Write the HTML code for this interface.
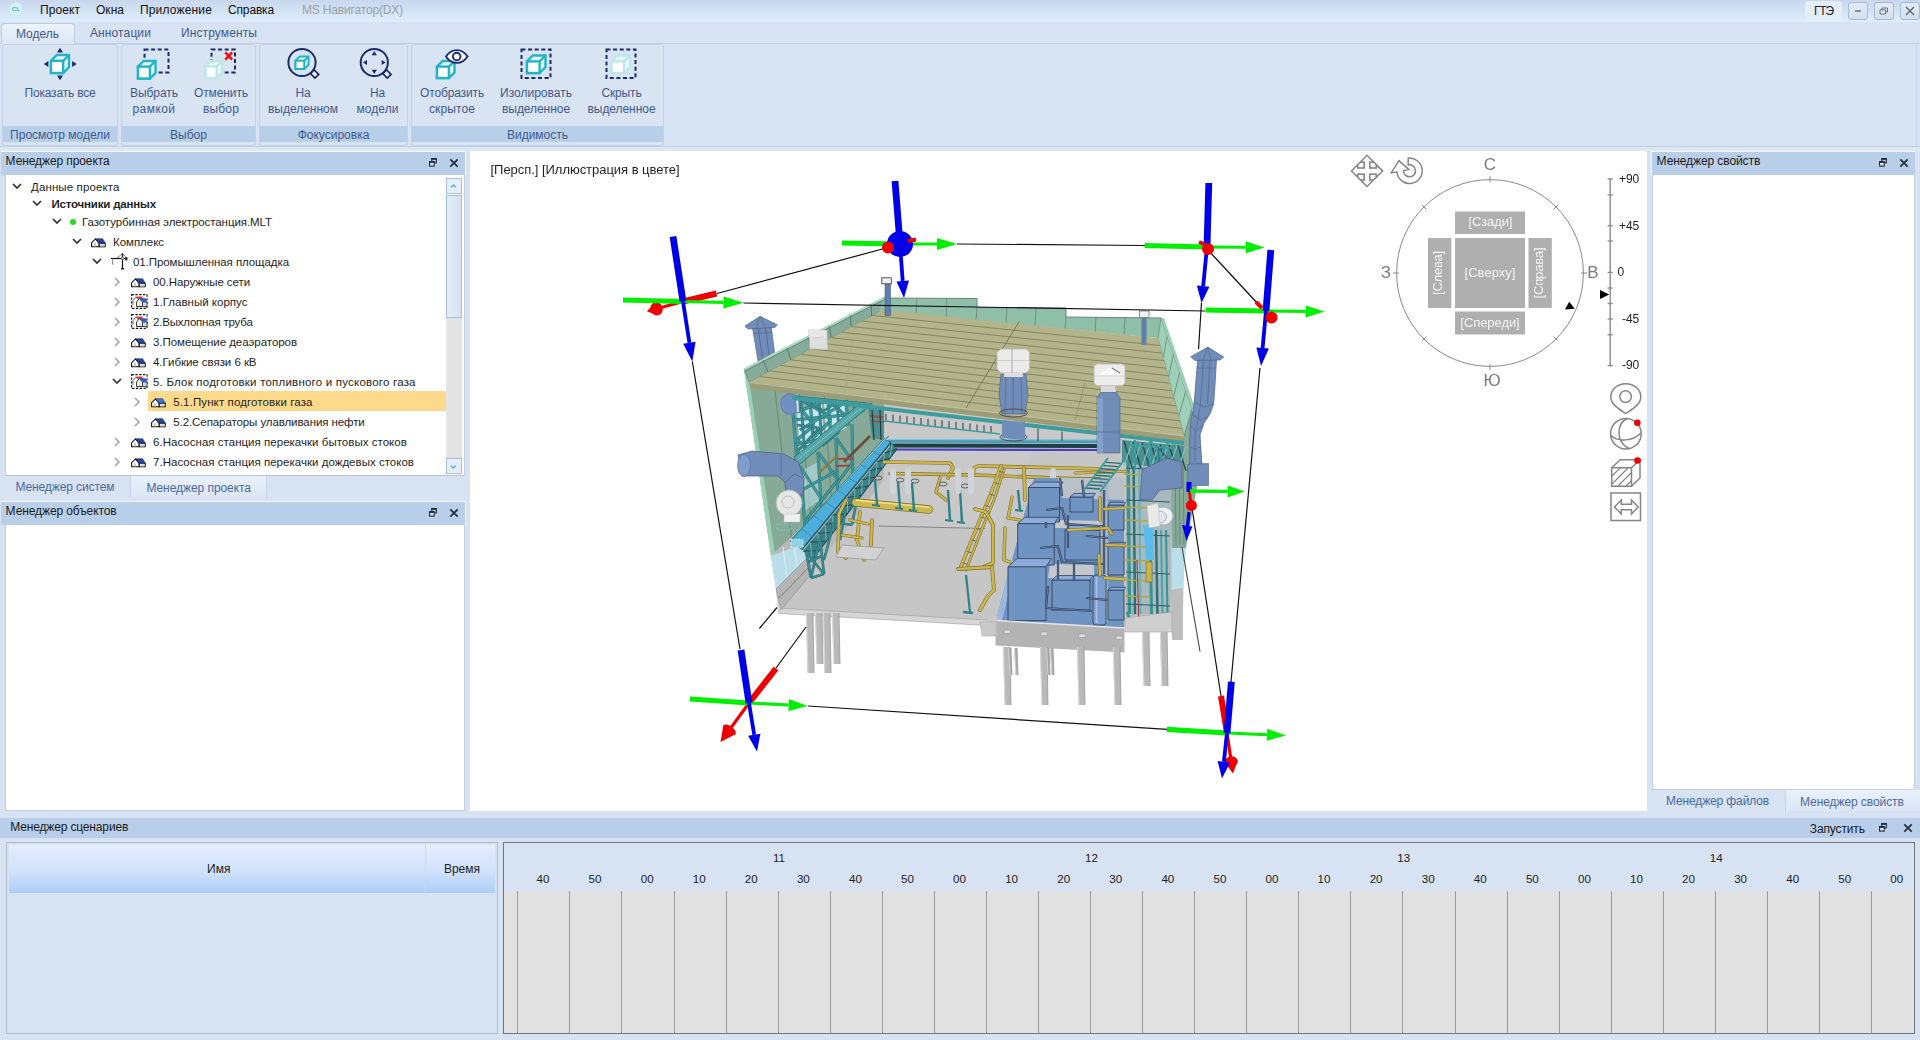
<!DOCTYPE html>
<html lang="ru"><head><meta charset="utf-8"><title>MS Навигатор(DX)</title>
<style>
html,body{margin:0;padding:0;}
body{width:1920px;height:1040px;overflow:hidden;background:#d7e3f2;font-family:"Liberation Sans", sans-serif;position:relative;}
#app{position:absolute;left:0;top:0;width:1920px;height:1040px;overflow:hidden;}
#app div{position:absolute;box-sizing:border-box;}
.t{position:absolute;white-space:pre;font-family:"Liberation Sans", sans-serif;}
svg{position:absolute;overflow:visible;}
</style></head><body><div id="app">
<div style="left:0px;top:0px;width:1920px;height:22px;background:linear-gradient(#c8d7ee,#d3e3f4 50%,#deeefd);"></div>
<svg style="left:8px;top:1px" width="16" height="16" viewBox="0 0 16 16"><path d="M7.800 1.300a6.600 6.600 0 1 1-3.600 12.100L2.300 14.600l.5-2.700A6.600 6.600 0 0 1 7.800 1.300z" fill="#d3f2f3" stroke="#bfe9ec" stroke-width="0.6"/><text x="3.700" y="10.200" font-size="6.200" font-weight="700" font-family="Liberation Sans" fill="#2fb6c8">CL</text></svg>
<div style="left:1805px;top:1px;width:37px;height:20px;background:#e4eefa;border-radius:4px;"></div>
<div style="left:1848px;top:2px;width:20px;height:18px;background:linear-gradient(#e2ebf8,#d3dff0);border:1px solid #a9b9d0;border-radius:3px;"></div>
<div style="left:1874px;top:2px;width:20px;height:18px;background:linear-gradient(#e2ebf8,#d3dff0);border:1px solid #a9b9d0;border-radius:3px;"></div>
<div style="left:1900px;top:2px;width:20px;height:18px;background:linear-gradient(#e2ebf8,#d3dff0);border:1px solid #a9b9d0;border-radius:3px;"></div>
<div style="left:1855px;top:10px;width:6px;height:2px;background:#8a919c;"></div>
<svg style="left:1879px;top:7px" width="10" height="9" viewBox="0 0 10 9"><path d="M3 2.500V1h5.500v4H7M1 2.800h5.500v4.200H1z" fill="none" stroke="#6d7480" stroke-width="1"/></svg>
<svg style="left:1905px;top:6px" width="10" height="10" viewBox="0 0 10 10"><path d="M1 1l8 8M9 1l-8 8" stroke="#555c66" stroke-width="1.1"/></svg>
<div style="left:0px;top:22px;width:1920px;height:22px;background:#d7e3f2;"></div>
<div style="left:1px;top:23px;width:74px;height:21px;background:linear-gradient(#edf3fc,#dbe5f4);border:1px solid #bccde4;border-bottom:none;border-radius:4px 4px 0 0;"></div>
<div style="left:0px;top:43px;width:1920px;height:1px;background:#bfd0e6;"></div>
<div style="left:2px;top:43px;width:72px;height:1px;background:#dbe5f4;"></div>
<div style="left:2px;top:44px;width:116px;height:102px;background:#d9e4f3;border:1px solid #c2d1e6;border-radius:3px;"></div>
<div style="left:3px;top:126px;width:114px;height:16px;background:#b7cfe9;"></div>
<div style="left:121px;top:44px;width:135px;height:102px;background:#d9e4f3;border:1px solid #c2d1e6;border-radius:3px;"></div>
<div style="left:122px;top:126px;width:133px;height:16px;background:#b7cfe9;"></div>
<div style="left:259px;top:44px;width:149px;height:102px;background:#d9e4f3;border:1px solid #c2d1e6;border-radius:3px;"></div>
<div style="left:260px;top:126px;width:147px;height:16px;background:#b7cfe9;"></div>
<div style="left:411px;top:44px;width:253px;height:102px;background:#d9e4f3;border:1px solid #c2d1e6;border-radius:3px;"></div>
<div style="left:412px;top:126px;width:251px;height:16px;background:#b7cfe9;"></div>
<div style="left:1916px;top:44px;width:1px;height:102px;background:#c6d5e9;"></div>
<div style="left:0px;top:146px;width:1920px;height:1px;background:#bfcfe4;"></div>
<div style="left:0px;top:147px;width:1920px;height:4px;background:#dde7f4;"></div>
<div style="left:1px;top:151px;width:465px;height:24px;background:#f4f8fd;"></div>
<div style="left:1px;top:152px;width:464px;height:23px;background:#b9cfe9;"></div>
<svg style="left:428px;top:157px" width="12" height="11" viewBox="0 0 12 11"><path d="M3.800 4V1.700H8.300V6H7" fill="none" stroke="#1e2a36" stroke-width="1.100"/><path d="M3.300 1.900H8.800" stroke="#1e2a36" stroke-width="1.700"/><rect x="1.600" y="4.800" width="4.600" height="4.300" fill="#dce8f8" stroke="#1e2a36" stroke-width="1.100"/><path d="M1.100 5H6.700" stroke="#1e2a36" stroke-width="1.700"/></svg>
<svg style="left:449px;top:158px" width="10" height="10" viewBox="0 0 10 10"><path d="M1.300 1.300L8.700 8.600M8.700 1.300L1.300 8.600" stroke="#26303c" stroke-width="1.800"/></svg>
<div style="left:5px;top:175px;width:460px;height:301px;background:#fff;border-left:1px solid #c5d0df;border-right:1px solid #c5d0df;border-bottom:1px solid #b9c4d4;"></div>
<div style="left:446px;top:318px;width:16px;height:140px;background:#e4e4e4;"></div>
<div style="left:446px;top:178px;width:16px;height:16px;background:#e5eefb;border:1px solid #a9bdd9;"></div>
<div style="left:446px;top:195px;width:16px;height:123px;background:linear-gradient(90deg,#e6eefa,#d6e1f1);border:1px solid #a9bdd9;"></div>
<div style="left:446px;top:458px;width:16px;height:16px;background:#e5eefb;border:1px solid #a9bdd9;"></div>
<svg style="left:450px;top:184px" width="7" height="4" viewBox="0 0 7 4"><path d="M0.800 3.300L3.300 1 5.800 3.300" fill="none" stroke="#3fa9d0" stroke-width="1.200"/></svg>
<svg style="left:450px;top:464.500px" width="7" height="4" viewBox="0 0 7 4"><path d="M0.800 0.700L3.300 3 5.800 0.700" fill="none" stroke="#3fa9d0" stroke-width="1.200"/></svg>
<div style="left:148px;top:391px;width:298px;height:20px;background:#fdd98c;"></div>
<svg style="left:12px;top:183px" width="10" height="7" viewBox="0 0 10 7"><path d="M1 1l4 4 4-4" fill="none" stroke="#333" stroke-width="1.700"/></svg>
<svg style="left:32px;top:200px" width="10" height="7" viewBox="0 0 10 7"><path d="M1 1l4 4 4-4" fill="none" stroke="#333" stroke-width="1.700"/></svg>
<svg style="left:52px;top:218px" width="10" height="7" viewBox="0 0 10 7"><path d="M1 1l4 4 4-4" fill="none" stroke="#333" stroke-width="1.700"/></svg>
<div style="left:70px;top:219px;width:6px;height:6px;background:#22dd22;border-radius:3px;"></div>
<svg style="left:72px;top:238px" width="10" height="7" viewBox="0 0 10 7"><path d="M1 1l4 4 4-4" fill="none" stroke="#333" stroke-width="1.700"/></svg>
<svg style="left:91px;top:237.6px" width="15" height="9.400" viewBox="0 0 15 10" preserveAspectRatio="none"><path d="M8 5.500H14.300V9.400H8z" fill="#ededed" stroke="#111" stroke-width="1"/><path d="M0.600 9.400V5L4.500 1 8 5.500V9.400z" fill="#fff" stroke="#111" stroke-width="1.100"/><path d="M4.500 0.700H11.600L14.400 5.500H8z" fill="#2447a5" stroke="#111" stroke-width="0.500"/><rect x="2.900" y="5.600" width="2" height="3.300" fill="#c9c9c9"/><rect x="9.700" y="6.600" width="3" height="2.300" fill="#d2d2d2"/></svg>
<svg style="left:92px;top:258px" width="10" height="7" viewBox="0 0 10 7"><path d="M1 1l4 4 4-4" fill="none" stroke="#333" stroke-width="1.700"/></svg>
<svg style="left:110px;top:252px" width="18" height="18" viewBox="0 0 18 18"><path d="M12.500 1.300V16.500" stroke="#111" stroke-width="1.200"/><path d="M11 16.800H14.200" stroke="#111" stroke-width="1.300"/><path d="M1 6.500H16.800" stroke="#111" stroke-width="1.200"/><path d="M12.500 1.500L7 6.200M12.500 1.500L16.200 5.500" stroke="#333" stroke-width="0.700" fill="none"/><rect x="15.400" y="5.200" width="2" height="3.200" fill="#111"/><path d="M2.500 6.500V12.300h1" stroke="#888" stroke-width="0.900" fill="none"/><circle cx="12.500" cy="6.500" r="1.400" fill="#c4c4c4" stroke="#333" stroke-width="0.500"/></svg>
<svg style="left:114.3px;top:277.2px" width="7" height="10" viewBox="0 0 7 10"><path d="M1 1l4 4-4 4" fill="none" stroke="#a4a4a4" stroke-width="1.600"/></svg>
<svg style="left:131px;top:277.59999999999997px" width="15" height="9.400" viewBox="0 0 15 10" preserveAspectRatio="none"><path d="M8 5.500H14.300V9.400H8z" fill="#ededed" stroke="#111" stroke-width="1"/><path d="M0.600 9.400V5L4.500 1 8 5.500V9.400z" fill="#fff" stroke="#111" stroke-width="1.100"/><path d="M4.500 0.700H11.600L14.400 5.500H8z" fill="#2447a5" stroke="#111" stroke-width="0.500"/><rect x="2.900" y="5.600" width="2" height="3.300" fill="#c9c9c9"/><rect x="9.700" y="6.600" width="3" height="2.300" fill="#d2d2d2"/></svg>
<svg style="left:114.3px;top:297.2px" width="7" height="10" viewBox="0 0 7 10"><path d="M1 1l4 4-4 4" fill="none" stroke="#a4a4a4" stroke-width="1.600"/></svg>
<svg style="left:131px;top:294px" width="17" height="15" viewBox="0 0 17 15"><rect x="0.600" y="0.600" width="15.400" height="13.800" fill="#fff" stroke="#111" stroke-width="1.100" stroke-dasharray="2.300 1.500"/><path d="M2 11V6.500L5 3 8 6.500" fill="#fff" stroke="#444" stroke-width="0.800"/><path d="M5 2.400H11L12.600 5H7z" fill="#e8382c"/><path d="M11.500 8H16V12.500H11.500z" fill="#e6e6e6" stroke="#222" stroke-width="0.800"/><path d="M5.500 12.500V8L8.500 4.500 11.500 8V12.500z" fill="#fff" stroke="#222" stroke-width="0.900"/><path d="M8.500 4.200H14.600L16.400 8H11.500z" fill="#2e5fd0"/><rect x="7.600" y="9" width="1.800" height="3" fill="#d0d0d0"/><rect x="12.600" y="9.300" width="2.400" height="2" fill="#d0d0d0"/></svg>
<svg style="left:114.3px;top:317.2px" width="7" height="10" viewBox="0 0 7 10"><path d="M1 1l4 4-4 4" fill="none" stroke="#a4a4a4" stroke-width="1.600"/></svg>
<svg style="left:131px;top:314px" width="17" height="15" viewBox="0 0 17 15"><rect x="0.600" y="0.600" width="15.400" height="13.800" fill="#fff" stroke="#111" stroke-width="1.100" stroke-dasharray="2.300 1.500"/><path d="M2 11V6.500L5 3 8 6.500" fill="#fff" stroke="#444" stroke-width="0.800"/><path d="M5 2.400H11L12.600 5H7z" fill="#e8382c"/><path d="M11.500 8H16V12.500H11.500z" fill="#e6e6e6" stroke="#222" stroke-width="0.800"/><path d="M5.500 12.500V8L8.500 4.500 11.500 8V12.500z" fill="#fff" stroke="#222" stroke-width="0.900"/><path d="M8.500 4.200H14.600L16.400 8H11.500z" fill="#2e5fd0"/><rect x="7.600" y="9" width="1.800" height="3" fill="#d0d0d0"/><rect x="12.600" y="9.300" width="2.400" height="2" fill="#d0d0d0"/></svg>
<svg style="left:114.3px;top:337.2px" width="7" height="10" viewBox="0 0 7 10"><path d="M1 1l4 4-4 4" fill="none" stroke="#a4a4a4" stroke-width="1.600"/></svg>
<svg style="left:131px;top:337.59999999999997px" width="15" height="9.400" viewBox="0 0 15 10" preserveAspectRatio="none"><path d="M8 5.500H14.300V9.400H8z" fill="#ededed" stroke="#111" stroke-width="1"/><path d="M0.600 9.400V5L4.500 1 8 5.500V9.400z" fill="#fff" stroke="#111" stroke-width="1.100"/><path d="M4.500 0.700H11.600L14.400 5.500H8z" fill="#2447a5" stroke="#111" stroke-width="0.500"/><rect x="2.900" y="5.600" width="2" height="3.300" fill="#c9c9c9"/><rect x="9.700" y="6.600" width="3" height="2.300" fill="#d2d2d2"/></svg>
<svg style="left:114.3px;top:357.2px" width="7" height="10" viewBox="0 0 7 10"><path d="M1 1l4 4-4 4" fill="none" stroke="#a4a4a4" stroke-width="1.600"/></svg>
<svg style="left:131px;top:357.59999999999997px" width="15" height="9.400" viewBox="0 0 15 10" preserveAspectRatio="none"><path d="M8 5.500H14.300V9.400H8z" fill="#ededed" stroke="#111" stroke-width="1"/><path d="M0.600 9.400V5L4.500 1 8 5.500V9.400z" fill="#fff" stroke="#111" stroke-width="1.100"/><path d="M4.500 0.700H11.600L14.400 5.500H8z" fill="#2447a5" stroke="#111" stroke-width="0.500"/><rect x="2.900" y="5.600" width="2" height="3.300" fill="#c9c9c9"/><rect x="9.700" y="6.600" width="3" height="2.300" fill="#d2d2d2"/></svg>
<svg style="left:112px;top:378px" width="10" height="7" viewBox="0 0 10 7"><path d="M1 1l4 4 4-4" fill="none" stroke="#333" stroke-width="1.700"/></svg>
<svg style="left:131px;top:374px" width="17" height="15" viewBox="0 0 17 15"><rect x="0.600" y="0.600" width="15.400" height="13.800" fill="#fff" stroke="#111" stroke-width="1.100" stroke-dasharray="2.300 1.500"/><path d="M2 11V6.500L5 3 8 6.500" fill="#fff" stroke="#444" stroke-width="0.800"/><path d="M5 2.400H11L12.600 5H7z" fill="#e8382c"/><path d="M11.500 8H16V12.500H11.500z" fill="#e6e6e6" stroke="#222" stroke-width="0.800"/><path d="M5.500 12.500V8L8.500 4.500 11.500 8V12.500z" fill="#fff" stroke="#222" stroke-width="0.900"/><path d="M8.500 4.200H14.600L16.400 8H11.500z" fill="#2e5fd0"/><rect x="7.600" y="9" width="1.800" height="3" fill="#d0d0d0"/><rect x="12.600" y="9.300" width="2.400" height="2" fill="#d0d0d0"/></svg>
<svg style="left:134.3px;top:397.2px" width="7" height="10" viewBox="0 0 7 10"><path d="M1 1l4 4-4 4" fill="none" stroke="#a4a4a4" stroke-width="1.600"/></svg>
<svg style="left:151.3px;top:397.59999999999997px" width="15" height="9.400" viewBox="0 0 15 10" preserveAspectRatio="none"><path d="M8 5.500H14.300V9.400H8z" fill="#ededed" stroke="#111" stroke-width="1"/><path d="M0.600 9.400V5L4.500 1 8 5.500V9.400z" fill="#fff" stroke="#111" stroke-width="1.100"/><path d="M4.500 0.700H11.600L14.400 5.500H8z" fill="#3b74e0" stroke="#111" stroke-width="0.500"/><rect x="2.900" y="5.600" width="2" height="3.300" fill="#c9c9c9"/><rect x="9.700" y="6.600" width="3" height="2.300" fill="#d2d2d2"/></svg>
<svg style="left:134.3px;top:417.2px" width="7" height="10" viewBox="0 0 7 10"><path d="M1 1l4 4-4 4" fill="none" stroke="#a4a4a4" stroke-width="1.600"/></svg>
<svg style="left:151.3px;top:417.59999999999997px" width="15" height="9.400" viewBox="0 0 15 10" preserveAspectRatio="none"><path d="M8 5.500H14.300V9.400H8z" fill="#ededed" stroke="#111" stroke-width="1"/><path d="M0.600 9.400V5L4.500 1 8 5.500V9.400z" fill="#fff" stroke="#111" stroke-width="1.100"/><path d="M4.500 0.700H11.600L14.400 5.500H8z" fill="#2447a5" stroke="#111" stroke-width="0.500"/><rect x="2.900" y="5.600" width="2" height="3.300" fill="#c9c9c9"/><rect x="9.700" y="6.600" width="3" height="2.300" fill="#d2d2d2"/></svg>
<svg style="left:114.3px;top:437.2px" width="7" height="10" viewBox="0 0 7 10"><path d="M1 1l4 4-4 4" fill="none" stroke="#a4a4a4" stroke-width="1.600"/></svg>
<svg style="left:131px;top:437.59999999999997px" width="15" height="9.400" viewBox="0 0 15 10" preserveAspectRatio="none"><path d="M8 5.500H14.300V9.400H8z" fill="#ededed" stroke="#111" stroke-width="1"/><path d="M0.600 9.400V5L4.500 1 8 5.500V9.400z" fill="#fff" stroke="#111" stroke-width="1.100"/><path d="M4.500 0.700H11.600L14.400 5.500H8z" fill="#2447a5" stroke="#111" stroke-width="0.500"/><rect x="2.900" y="5.600" width="2" height="3.300" fill="#c9c9c9"/><rect x="9.700" y="6.600" width="3" height="2.300" fill="#d2d2d2"/></svg>
<svg style="left:114.3px;top:457.2px" width="7" height="10" viewBox="0 0 7 10"><path d="M1 1l4 4-4 4" fill="none" stroke="#a4a4a4" stroke-width="1.600"/></svg>
<svg style="left:131px;top:457.59999999999997px" width="15" height="9.400" viewBox="0 0 15 10" preserveAspectRatio="none"><path d="M8 5.500H14.300V9.400H8z" fill="#ededed" stroke="#111" stroke-width="1"/><path d="M0.600 9.400V5L4.500 1 8 5.500V9.400z" fill="#fff" stroke="#111" stroke-width="1.100"/><path d="M4.500 0.700H11.600L14.400 5.500H8z" fill="#2447a5" stroke="#111" stroke-width="0.500"/><rect x="2.900" y="5.600" width="2" height="3.300" fill="#c9c9c9"/><rect x="9.700" y="6.600" width="3" height="2.300" fill="#d2d2d2"/></svg>
<div style="left:130px;top:476px;width:137px;height:21px;background:linear-gradient(#e9f1fc,#dbe5f4);border-left:1px solid #c5d3e6;border-right:1px solid #c5d3e6;"></div>
<div style="left:1px;top:501px;width:465px;height:24px;background:#f4f8fd;"></div>
<div style="left:1px;top:502px;width:464px;height:23px;background:#b9cfe9;"></div>
<svg style="left:428px;top:507px" width="12" height="11" viewBox="0 0 12 11"><path d="M3.800 4V1.700H8.300V6H7" fill="none" stroke="#1e2a36" stroke-width="1.100"/><path d="M3.300 1.900H8.800" stroke="#1e2a36" stroke-width="1.700"/><rect x="1.600" y="4.800" width="4.600" height="4.300" fill="#dce8f8" stroke="#1e2a36" stroke-width="1.100"/><path d="M1.100 5H6.700" stroke="#1e2a36" stroke-width="1.700"/></svg>
<svg style="left:449px;top:508px" width="10" height="10" viewBox="0 0 10 10"><path d="M1.300 1.300L8.700 8.600M8.700 1.300L1.300 8.600" stroke="#26303c" stroke-width="1.800"/></svg>
<div style="left:5px;top:525px;width:460px;height:286px;background:#fff;border:1px solid #c5d0df;border-top:none;"></div>
<div style="left:470px;top:151px;width:1177px;height:660px;background:#fff;"></div>
<div style="left:1651px;top:151px;width:264px;height:24px;background:#f4f8fd;"></div>
<div style="left:1652px;top:152px;width:263px;height:23px;background:#b9cfe9;"></div>
<svg style="left:1878px;top:157px" width="12" height="11" viewBox="0 0 12 11"><path d="M3.800 4V1.700H8.300V6H7" fill="none" stroke="#1e2a36" stroke-width="1.100"/><path d="M3.300 1.900H8.800" stroke="#1e2a36" stroke-width="1.700"/><rect x="1.600" y="4.800" width="4.600" height="4.300" fill="#dce8f8" stroke="#1e2a36" stroke-width="1.100"/><path d="M1.100 5H6.700" stroke="#1e2a36" stroke-width="1.700"/></svg>
<svg style="left:1899px;top:158px" width="10" height="10" viewBox="0 0 10 10"><path d="M1.300 1.300L8.700 8.600M8.700 1.300L1.300 8.600" stroke="#26303c" stroke-width="1.800"/></svg>
<div style="left:1652px;top:175px;width:263px;height:615px;background:#fff;border:1px solid #c5d0df;border-top:none;"></div>
<div style="left:1785px;top:790px;width:135px;height:21px;background:linear-gradient(#e9f1fc,#dbe5f4);border-left:1px solid #c5d3e6;"></div>
<div style="left:0px;top:818px;width:1920px;height:20px;background:#b9cfe9;"></div>
<svg style="left:1878px;top:822px" width="12" height="11" viewBox="0 0 12 11"><path d="M3.800 4V1.700H8.300V6H7" fill="none" stroke="#1e2a36" stroke-width="1.100"/><path d="M3.300 1.900H8.800" stroke="#1e2a36" stroke-width="1.700"/><rect x="1.600" y="4.800" width="4.600" height="4.300" fill="#dce8f8" stroke="#1e2a36" stroke-width="1.100"/><path d="M1.100 5H6.700" stroke="#1e2a36" stroke-width="1.700"/></svg>
<svg style="left:1902.5px;top:823px" width="10" height="10" viewBox="0 0 10 10"><path d="M1.300 1.300L8.700 8.600M8.700 1.300L1.300 8.600" stroke="#26303c" stroke-width="1.800"/></svg>
<div style="left:6px;top:842px;width:492px;height:192px;border:1px solid #b3bcc9;background:#d7e3f2;"></div>
<div style="left:9px;top:845px;width:486px;height:48px;background:linear-gradient(#e5eefc,#d0e1fa 55%,#aecdf8);"></div>
<div style="left:425px;top:845px;width:1px;height:48px;background:#c9d9ef;"></div>
<div style="left:503px;top:842px;width:1412px;height:192px;border:1px solid #70757c;background:#d7e3f2;"></div>
<div style="left:504px;top:891px;width:1410px;height:142px;background:#e1e1e1;"></div>
<div style="left:517px;top:891px;width:1px;height:142px;background:#9b9b9b;"></div>
<div style="left:569px;top:891px;width:1px;height:142px;background:#9b9b9b;"></div>
<div style="left:621px;top:891px;width:1px;height:142px;background:#9b9b9b;"></div>
<div style="left:674px;top:891px;width:1px;height:142px;background:#9b9b9b;"></div>
<div style="left:726px;top:891px;width:1px;height:142px;background:#9b9b9b;"></div>
<div style="left:778px;top:891px;width:1px;height:142px;background:#9b9b9b;"></div>
<div style="left:830px;top:891px;width:1px;height:142px;background:#9b9b9b;"></div>
<div style="left:882px;top:891px;width:1px;height:142px;background:#9b9b9b;"></div>
<div style="left:934px;top:891px;width:1px;height:142px;background:#9b9b9b;"></div>
<div style="left:986px;top:891px;width:1px;height:142px;background:#9b9b9b;"></div>
<div style="left:1038px;top:891px;width:1px;height:142px;background:#9b9b9b;"></div>
<div style="left:1090px;top:891px;width:1px;height:142px;background:#9b9b9b;"></div>
<div style="left:1142px;top:891px;width:1px;height:142px;background:#9b9b9b;"></div>
<div style="left:1194px;top:891px;width:1px;height:142px;background:#9b9b9b;"></div>
<div style="left:1246px;top:891px;width:1px;height:142px;background:#9b9b9b;"></div>
<div style="left:1298px;top:891px;width:1px;height:142px;background:#9b9b9b;"></div>
<div style="left:1350px;top:891px;width:1px;height:142px;background:#9b9b9b;"></div>
<div style="left:1402px;top:891px;width:1px;height:142px;background:#9b9b9b;"></div>
<div style="left:1455px;top:891px;width:1px;height:142px;background:#9b9b9b;"></div>
<div style="left:1507px;top:891px;width:1px;height:142px;background:#9b9b9b;"></div>
<div style="left:1559px;top:891px;width:1px;height:142px;background:#9b9b9b;"></div>
<div style="left:1611px;top:891px;width:1px;height:142px;background:#9b9b9b;"></div>
<div style="left:1663px;top:891px;width:1px;height:142px;background:#9b9b9b;"></div>
<div style="left:1715px;top:891px;width:1px;height:142px;background:#9b9b9b;"></div>
<div style="left:1767px;top:891px;width:1px;height:142px;background:#9b9b9b;"></div>
<div style="left:1819px;top:891px;width:1px;height:142px;background:#9b9b9b;"></div>
<div style="left:1871px;top:891px;width:1px;height:142px;background:#9b9b9b;"></div>
<svg style="left:0;top:0" width="700" height="150" viewBox="0 0 700 150"><path d="M51.0 60.8L56.8 55.0H69.0V67.2L63.2 73.0H51.0Z" fill="#e9f7f9" stroke="#22b4c6" stroke-width="2.4" stroke-linejoin="miter"/><rect x="51.0" y="60.8" width="12.2" height="12.2" fill="#fff" stroke="#22b4c6" stroke-width="2.4"/><path d="M63.2 60.8L69.0 55.0" stroke="#22b4c6" stroke-width="2.4"/><polygon points="60.0,47.8 63.0,52.4 57.0,52.4" fill="#1b2a6b"/><polygon points="60.0,80.2 63.0,75.6 57.0,75.6" fill="#1b2a6b"/><polygon points="43.8,64.0 48.4,61.0 48.4,67.0" fill="#1b2a6b"/><polygon points="76.7,64.0 72.1,61.0 72.1,67.0" fill="#1b2a6b"/><rect x="144.5" y="49.5" width="24.0" height="23.0" fill="none" stroke="#1b2a6b" stroke-width="2" stroke-dasharray="4 2.6"/><path d="M138.0 66.6L143.6 61.0H155.5V72.9L149.9 78.5H138.0Z" fill="#e9f7f9" stroke="#22b4c6" stroke-width="2.4" stroke-linejoin="miter"/><rect x="138.0" y="66.6" width="11.9" height="11.9" fill="#fff" stroke="#22b4c6" stroke-width="2.4"/><path d="M149.9 66.6L155.5 61.0" stroke="#22b4c6" stroke-width="2.4"/><rect x="211.5" y="49.5" width="23.5" height="23.0" fill="none" stroke="#1b2a6b" stroke-width="2" stroke-dasharray="4 2.6"/><path d="M205.5 66.3L210.8 61.0H222.0V72.7L216.7 78.0H205.5Z" fill="#e9f7f9" stroke="#bfe7ea" stroke-width="2.4" stroke-linejoin="miter"/><rect x="205.5" y="66.3" width="11.2" height="11.7" fill="#fff" stroke="#bfe7ea" stroke-width="2.4"/><path d="M216.7 66.3L222.0 61.0" stroke="#bfe7ea" stroke-width="2.4"/><path d="M225.300 52.300l6.800 7.400M232.100 52.300l-6.800 7.400" stroke="#e8101c" stroke-width="2.600"/><circle cx="302" cy="62.500" r="13.600" fill="none" stroke="#1b2a6b" stroke-width="2"/><path d="M310.500 73.500l3.800-3.600 4.400 4.600-3.800 3.600z" fill="#eef3fa" stroke="#1b2a6b" stroke-width="1.800"/><path d="M295.5 60.7L299.7 56.5H308.5V64.8L304.3 69.0H295.5Z" fill="#e9f7f9" stroke="#22b4c6" stroke-width="2" stroke-linejoin="miter"/><rect x="295.5" y="60.7" width="8.8" height="8.3" fill="#fff" stroke="#22b4c6" stroke-width="2"/><path d="M304.3 60.7L308.5 56.5" stroke="#22b4c6" stroke-width="2"/><circle cx="374.300" cy="62.500" r="13.600" fill="none" stroke="#1b2a6b" stroke-width="2"/><path d="M382.800 73.500l3.800-3.600 4.400 4.600-3.800 3.600z" fill="#eef3fa" stroke="#1b2a6b" stroke-width="1.800"/><polygon points="374.3,51.1 376.9,55.2 371.7,55.2" fill="#1b2a6b"/><polygon points="374.3,73.9 376.9,69.8 371.7,69.8" fill="#1b2a6b"/><polygon points="362.9,62.5 367.0,59.9 367.0,65.1" fill="#1b2a6b"/><polygon points="385.7,62.5 381.6,59.9 381.6,65.1" fill="#1b2a6b"/><path d="M437.0 66.6L442.6 61.0H454.5V72.4L448.9 78.0H437.0Z" fill="#e9f7f9" stroke="#22b4c6" stroke-width="2.4" stroke-linejoin="miter"/><rect x="437.0" y="66.6" width="11.9" height="11.4" fill="#fff" stroke="#22b4c6" stroke-width="2.4"/><path d="M448.9 66.6L454.5 61.0" stroke="#22b4c6" stroke-width="2.4"/><path d="M446 56.500c5.500-8.500 16-8.500 21.500 0c-5.500 8.500-16 8.500-21.500 0z" fill="#f4f8fd" stroke="#1b2a6b" stroke-width="1.900"/><circle cx="456.700" cy="56.500" r="3.800" fill="#fff" stroke="#1b2a6b" stroke-width="1.900"/><rect x="521.5" y="49.5" width="29.0" height="28.5" fill="none" stroke="#1b2a6b" stroke-width="2" stroke-dasharray="4 2.6"/><path d="M527.0 61.4L532.9 55.5H545.5V67.1L539.6 73.0H527.0Z" fill="#e9f7f9" stroke="#22b4c6" stroke-width="2.4" stroke-linejoin="miter"/><rect x="527.0" y="61.4" width="12.6" height="11.6" fill="#fff" stroke="#22b4c6" stroke-width="2.4"/><path d="M539.6 61.4L545.5 55.5" stroke="#22b4c6" stroke-width="2.4"/><rect x="606.5" y="49.5" width="29.0" height="28.5" fill="none" stroke="#1b2a6b" stroke-width="2" stroke-dasharray="4 2.6"/><path d="M611.5 61.4L617.4 55.5H630.0V67.1L624.1 73.0H611.5Z" fill="#e9f7f9" stroke="#bfe7ea" stroke-width="2.4" stroke-linejoin="miter"/><rect x="611.5" y="61.4" width="12.6" height="11.6" fill="#fff" stroke="#bfe7ea" stroke-width="2.4"/><path d="M624.1 61.4L630.0 55.5" stroke="#bfe7ea" stroke-width="2.4"/></svg>
<svg style="left:0;top:0" width="1920" height="1040" viewBox="0 0 1920 1040"><polygon points="880.0,400.0 1186.0,430.0 1186.0,452.0 880.0,452.0" fill="#c9c9c9" />
<polygon points="776.0,590.0 880.0,445.0 1186.0,445.0 1183.0,615.0 1170.0,632.0 1125.0,632.0 1125.0,627.0 996.0,621.0 778.0,610.0" fill="#c6c6c6" />
<polygon points="778.0,608.0 996.0,620.5 996.0,626.0 779.0,613.5" fill="#d6d6d6" stroke="#9a9a9a" stroke-width="0.6" />
<polygon points="776.0,588.0 778.0,610.0 782.0,612.0 780.0,590.0" fill="#d6d6d6" />
<polygon points="880.0,450.0 1034.0,450.0 1000.0,530.0 879.0,526.0" fill="#c9c9c9" />
<line x1="879.0" y1="526.0" x2="985.0" y2="528.5" stroke="#7d7d7d" stroke-width="0.9" />
<polygon points="771.0,556.0 776.0,589.0 812.0,573.0 884.0,480.0 884.0,452.0" fill="#b9b9b9" />
<polygon points="744.0,369.0 771.0,556.0 884.0,452.0 884.0,300.0" fill="#87a997" />
<polygon points="744.0,369.0 750.0,386.0 776.0,560.0 771.0,556.0" fill="#9bd0b6" />
<line x1="773.4" y1="375.9" x2="791.4" y2="537.3" stroke="#5c7d70" stroke-width="0.8" />
<line x1="796.8" y1="365.8" x2="810.9" y2="518.6" stroke="#5c7d70" stroke-width="0.8" />
<line x1="821.5" y1="355.2" x2="831.4" y2="498.8" stroke="#5c7d70" stroke-width="0.8" />
<polygon points="771.0,556.0 776.0,589.0 808.0,557.0 806.0,543.0" fill="#badfea" />
<line x1="783.0" y1="547.0" x2="787.0" y2="578.0" stroke="#d9eef5" stroke-width="1" />
<line x1="794.0" y1="545.0" x2="797.0" y2="568.0" stroke="#d9eef5" stroke-width="1" />
<polygon points="776.0,589.0 808.0,557.0 812.0,573.0 781.0,610.0" fill="#b5b5b5" stroke="#8e8e8e" stroke-width="0.6" />
<line x1="779.0" y1="598.0" x2="810.0" y2="566.0" stroke="#6d6d6d" stroke-width="0.8" />
<polygon points="1170.0,445.0 1192.0,409.0 1200.0,470.0 1186.0,548.0 1172.0,548.0" fill="#87a997" />
<polygon points="1172.0,548.0 1186.0,548.0 1181.0,612.0 1172.0,600.0" fill="#badfea" />
<line x1="1175.0" y1="450.0" x2="1176.0" y2="545.0" stroke="#5c7d70" stroke-width="0.7" />
<line x1="1179.0" y1="450.0" x2="1180.0" y2="545.0" stroke="#5c7d70" stroke-width="0.7" />
<line x1="1183.0" y1="450.0" x2="1184.0" y2="545.0" stroke="#5c7d70" stroke-width="0.7" />
<polygon points="1170.0,590.0 1183.0,588.0 1183.0,640.0 1172.0,640.0" fill="#bdbdbd" />
<line x1="890.0" y1="445.5" x2="1100.0" y2="446.0" stroke="#1d3f46" stroke-width="4" />
<line x1="892.0" y1="449.5" x2="1100.0" y2="450.0" stroke="#4b3fc0" stroke-width="2.2" />
<line x1="888.0" y1="441.0" x2="1100.0" y2="441.5" stroke="#4a9cb8" stroke-width="3.6" />
<line x1="888.0" y1="439.5" x2="1100.0" y2="440.0" stroke="#7cc8dc" stroke-width="1" />
<polygon points="797.0,412.0 822.0,404.0 824.0,440.0 800.0,456.0" fill="#c3e6f0" />
<polygon points="824.0,404.0 846.0,401.0 846.0,428.0 826.0,438.0" fill="#c3e6f0" />
<polygon points="803.0,470.0 818.0,462.0 820.0,500.0 806.0,510.0" fill="#b5dde8" stroke="none" stroke-width="0" opacity="0.6"/>
<line x1="792.0" y1="398.0" x2="797.0" y2="462.0" stroke="#2b6e76" stroke-width="3.2" />
<line x1="792.0" y1="398.0" x2="797.0" y2="462.0" stroke="#3f9c9c" stroke-width="2.2" />
<line x1="810.0" y1="399.0" x2="814.0" y2="452.0" stroke="#2b6e76" stroke-width="3.2" />
<line x1="810.0" y1="399.0" x2="814.0" y2="452.0" stroke="#3f9c9c" stroke-width="2.2" />
<line x1="828.0" y1="400.0" x2="831.0" y2="438.0" stroke="#2b6e76" stroke-width="3.2" />
<line x1="828.0" y1="400.0" x2="831.0" y2="438.0" stroke="#3f9c9c" stroke-width="2.2" />
<line x1="846.0" y1="401.0" x2="848.0" y2="426.0" stroke="#2b6e76" stroke-width="3.2" />
<line x1="846.0" y1="401.0" x2="848.0" y2="426.0" stroke="#3f9c9c" stroke-width="2.2" />
<line x1="862.0" y1="403.0" x2="863.0" y2="412.0" stroke="#2b6e76" stroke-width="3.2" />
<line x1="862.0" y1="403.0" x2="863.0" y2="412.0" stroke="#3f9c9c" stroke-width="2.2" />
<line x1="792.0" y1="398.0" x2="814.0" y2="425.0" stroke="#2b6e76" stroke-width="3.2" />
<line x1="792.0" y1="398.0" x2="814.0" y2="425.0" stroke="#3f9c9c" stroke-width="2.2" />
<line x1="814.0" y1="425.0" x2="797.0" y2="440.0" stroke="#2b6e76" stroke-width="3.2" />
<line x1="814.0" y1="425.0" x2="797.0" y2="440.0" stroke="#3f9c9c" stroke-width="2.2" />
<line x1="797.0" y1="440.0" x2="814.0" y2="452.0" stroke="#2b6e76" stroke-width="3.2" />
<line x1="797.0" y1="440.0" x2="814.0" y2="452.0" stroke="#3f9c9c" stroke-width="2.2" />
<line x1="810.0" y1="399.0" x2="831.0" y2="420.0" stroke="#2b6e76" stroke-width="3.2" />
<line x1="810.0" y1="399.0" x2="831.0" y2="420.0" stroke="#3f9c9c" stroke-width="2.2" />
<line x1="831.0" y1="420.0" x2="814.0" y2="437.0" stroke="#2b6e76" stroke-width="3.2" />
<line x1="831.0" y1="420.0" x2="814.0" y2="437.0" stroke="#3f9c9c" stroke-width="2.2" />
<line x1="828.0" y1="400.0" x2="848.0" y2="418.0" stroke="#2b6e76" stroke-width="3.2" />
<line x1="828.0" y1="400.0" x2="848.0" y2="418.0" stroke="#3f9c9c" stroke-width="2.2" />
<line x1="848.0" y1="418.0" x2="831.0" y2="432.0" stroke="#2b6e76" stroke-width="3.2" />
<line x1="848.0" y1="418.0" x2="831.0" y2="432.0" stroke="#3f9c9c" stroke-width="2.2" />
<line x1="846.0" y1="401.0" x2="863.0" y2="412.0" stroke="#2b6e76" stroke-width="3.2" />
<line x1="846.0" y1="401.0" x2="863.0" y2="412.0" stroke="#3f9c9c" stroke-width="2.2" />
<line x1="793.0" y1="420.0" x2="846.0" y2="415.0" stroke="#2b6e76" stroke-width="3.2" />
<line x1="793.0" y1="420.0" x2="846.0" y2="415.0" stroke="#3f9c9c" stroke-width="2.2" />
<line x1="795.0" y1="445.0" x2="830.0" y2="437.0" stroke="#2b6e76" stroke-width="3.2" />
<line x1="795.0" y1="445.0" x2="830.0" y2="437.0" stroke="#3f9c9c" stroke-width="2.2" />
<line x1="797.0" y1="412.0" x2="828.0" y2="400.0" stroke="#2b6e76" stroke-width="3.2" />
<line x1="797.0" y1="412.0" x2="828.0" y2="400.0" stroke="#3f9c9c" stroke-width="2.2" />
<line x1="800.0" y1="430.0" x2="846.0" y2="402.0" stroke="#2b6e76" stroke-width="3.2" />
<line x1="800.0" y1="430.0" x2="846.0" y2="402.0" stroke="#3f9c9c" stroke-width="2.2" />
<line x1="801.0" y1="400.0" x2="805.0" y2="458.0" stroke="#2b6e76" stroke-width="2.6" />
<line x1="801.0" y1="400.0" x2="805.0" y2="458.0" stroke="#3a8c90" stroke-width="1.6" />
<line x1="819.0" y1="400.0" x2="822.0" y2="446.0" stroke="#2b6e76" stroke-width="2.6" />
<line x1="819.0" y1="400.0" x2="822.0" y2="446.0" stroke="#3a8c90" stroke-width="1.6" />
<line x1="837.0" y1="401.0" x2="839.0" y2="432.0" stroke="#2b6e76" stroke-width="2.6" />
<line x1="837.0" y1="401.0" x2="839.0" y2="432.0" stroke="#3a8c90" stroke-width="1.6" />
<line x1="854.0" y1="402.0" x2="855.0" y2="418.0" stroke="#2b6e76" stroke-width="2.6" />
<line x1="854.0" y1="402.0" x2="855.0" y2="418.0" stroke="#3a8c90" stroke-width="1.6" />
<line x1="801.0" y1="400.0" x2="822.0" y2="412.0" stroke="#2b6e76" stroke-width="2.6" />
<line x1="801.0" y1="400.0" x2="822.0" y2="412.0" stroke="#3a8c90" stroke-width="1.6" />
<line x1="819.0" y1="428.0" x2="797.0" y2="452.0" stroke="#2b6e76" stroke-width="2.6" />
<line x1="819.0" y1="428.0" x2="797.0" y2="452.0" stroke="#3a8c90" stroke-width="1.6" />
<line x1="822.0" y1="412.0" x2="839.0" y2="401.0" stroke="#2b6e76" stroke-width="2.6" />
<line x1="822.0" y1="412.0" x2="839.0" y2="401.0" stroke="#3a8c90" stroke-width="1.6" />
<line x1="839.0" y1="432.0" x2="822.0" y2="446.0" stroke="#2b6e76" stroke-width="2.6" />
<line x1="839.0" y1="432.0" x2="822.0" y2="446.0" stroke="#3a8c90" stroke-width="1.6" />
<line x1="797.0" y1="425.0" x2="819.0" y2="428.0" stroke="#2b6e76" stroke-width="2.6" />
<line x1="797.0" y1="425.0" x2="819.0" y2="428.0" stroke="#3a8c90" stroke-width="1.6" />
<line x1="790.0" y1="397.0" x2="872.0" y2="405.0" stroke="#2b6e76" stroke-width="4.0" />
<line x1="790.0" y1="397.0" x2="872.0" y2="405.0" stroke="#3f9c9c" stroke-width="3" />
<polygon points="794.0,457.0 862.0,402.0 868.0,407.0 799.0,465.0" fill="#55a7a8" stroke="#2b6e76" stroke-width="0.9" />
<line x1="796.0" y1="461.0" x2="865.0" y2="405.0" stroke="#7cc4c4" stroke-width="1" />
<line x1="800.0" y1="466.0" x2="806.0" y2="540.0" stroke="#2b6e76" stroke-width="3.0" />
<line x1="800.0" y1="466.0" x2="806.0" y2="540.0" stroke="#3f9c9c" stroke-width="2" />
<line x1="818.0" y1="452.0" x2="822.0" y2="522.0" stroke="#2b6e76" stroke-width="3.0" />
<line x1="818.0" y1="452.0" x2="822.0" y2="522.0" stroke="#3f9c9c" stroke-width="2" />
<line x1="836.0" y1="438.0" x2="838.0" y2="505.0" stroke="#2b6e76" stroke-width="3.0" />
<line x1="836.0" y1="438.0" x2="838.0" y2="505.0" stroke="#3f9c9c" stroke-width="2" />
<line x1="852.0" y1="424.0" x2="853.0" y2="488.0" stroke="#2b6e76" stroke-width="3.0" />
<line x1="852.0" y1="424.0" x2="853.0" y2="488.0" stroke="#3f9c9c" stroke-width="2" />
<line x1="800.0" y1="466.0" x2="822.0" y2="500.0" stroke="#2b6e76" stroke-width="3.0" />
<line x1="800.0" y1="466.0" x2="822.0" y2="500.0" stroke="#3f9c9c" stroke-width="2" />
<line x1="822.0" y1="500.0" x2="806.0" y2="520.0" stroke="#2b6e76" stroke-width="3.0" />
<line x1="822.0" y1="500.0" x2="806.0" y2="520.0" stroke="#3f9c9c" stroke-width="2" />
<line x1="818.0" y1="452.0" x2="838.0" y2="480.0" stroke="#2b6e76" stroke-width="3.0" />
<line x1="818.0" y1="452.0" x2="838.0" y2="480.0" stroke="#3f9c9c" stroke-width="2" />
<line x1="838.0" y1="480.0" x2="822.0" y2="500.0" stroke="#2b6e76" stroke-width="3.0" />
<line x1="838.0" y1="480.0" x2="822.0" y2="500.0" stroke="#3f9c9c" stroke-width="2" />
<line x1="836.0" y1="438.0" x2="853.0" y2="462.0" stroke="#2b6e76" stroke-width="3.0" />
<line x1="836.0" y1="438.0" x2="853.0" y2="462.0" stroke="#3f9c9c" stroke-width="2" />
<line x1="853.0" y1="462.0" x2="838.0" y2="482.0" stroke="#2b6e76" stroke-width="3.0" />
<line x1="853.0" y1="462.0" x2="838.0" y2="482.0" stroke="#3f9c9c" stroke-width="2" />
<line x1="802.0" y1="490.0" x2="838.0" y2="470.0" stroke="#2b6e76" stroke-width="3.0" />
<line x1="802.0" y1="490.0" x2="838.0" y2="470.0" stroke="#3f9c9c" stroke-width="2" />
<line x1="806.0" y1="520.0" x2="822.0" y2="522.0" stroke="#2b6e76" stroke-width="3.0" />
<line x1="806.0" y1="520.0" x2="822.0" y2="522.0" stroke="#3f9c9c" stroke-width="2" />
<line x1="844.0" y1="462.0" x2="870.0" y2="436.0" stroke="#6d4a3c" stroke-width="2.6" />
<line x1="838.0" y1="459.0" x2="853.0" y2="458.5" stroke="#9a4a44" stroke-width="2.2" />
<line x1="836.0" y1="466.0" x2="850.0" y2="465.5" stroke="#9a4a44" stroke-width="2.2" />
<line x1="818.0" y1="474.0" x2="838.0" y2="455.0" stroke="#8d7c42" stroke-width="2.2" />
<polygon points="868.0,408.0 884.0,410.0 884.0,440.0 872.0,438.0" fill="#4f8f8f" />
<line x1="870.0" y1="416.0" x2="884.0" y2="417.0" stroke="#a04a44" stroke-width="2" />
<line x1="871.0" y1="421.0" x2="884.0" y2="422.0" stroke="#a04a44" stroke-width="1.5" />
<line x1="872.0" y1="410.0" x2="874.0" y2="440.0" stroke="#203a40" stroke-width="1.2" />
<line x1="880.0" y1="410.0" x2="881.0" y2="440.0" stroke="#203a40" stroke-width="1.2" />
<polygon points="790.0,541.0 802.0,549.5 891.0,442.5 884.0,439.0" fill="#4eaedb" stroke="#2b6e76" stroke-width="0.9" />
<polygon points="790.0,541.0 794.0,537.0 889.0,436.0 884.0,439.0" fill="#95d6ee" stroke="#2b6e76" stroke-width="0.5" />
<line x1="801.3" y1="528.8" x2="812.7" y2="536.7" stroke="#2f7f9c" stroke-width="0.7" />
<line x1="813.5" y1="515.5" x2="824.2" y2="522.8" stroke="#2f7f9c" stroke-width="0.7" />
<line x1="825.7" y1="502.2" x2="835.8" y2="508.8" stroke="#2f7f9c" stroke-width="0.7" />
<line x1="837.0" y1="490.0" x2="846.5" y2="496.0" stroke="#2f7f9c" stroke-width="0.7" />
<line x1="848.3" y1="477.8" x2="857.2" y2="483.2" stroke="#2f7f9c" stroke-width="0.7" />
<line x1="860.5" y1="464.5" x2="868.8" y2="469.2" stroke="#2f7f9c" stroke-width="0.7" />
<line x1="872.7" y1="451.2" x2="880.3" y2="455.3" stroke="#2f7f9c" stroke-width="0.7" />
<line x1="802.0" y1="549.5" x2="891.0" y2="442.5" stroke="#1f5a66" stroke-width="1.4" />
<rect x="791" y="539.500" width="12" height="8" fill="#8fd0ea" stroke="#e8f6fb" stroke-width="1" stroke-dasharray="2 1.5"/>
<polygon points="803.0,551.0 892.0,444.0 897.0,449.0 812.0,560.0" fill="#3d7f84" />
<line x1="803.0" y1="551.0" x2="819.1" y2="550.8" stroke="#1f4f55" stroke-width="1.1" />
<line x1="812.0" y1="560.0" x2="810.4" y2="542.1" stroke="#79c0c0" stroke-width="0.9" />
<line x1="810.4" y1="542.1" x2="826.2" y2="541.5" stroke="#1f4f55" stroke-width="1.1" />
<line x1="819.1" y1="550.8" x2="817.8" y2="533.2" stroke="#79c0c0" stroke-width="0.9" />
<line x1="817.8" y1="533.2" x2="833.2" y2="532.2" stroke="#1f4f55" stroke-width="1.1" />
<line x1="826.2" y1="541.5" x2="825.2" y2="524.2" stroke="#79c0c0" stroke-width="0.9" />
<line x1="825.2" y1="524.2" x2="840.3" y2="523.0" stroke="#1f4f55" stroke-width="1.1" />
<line x1="833.2" y1="532.2" x2="832.7" y2="515.3" stroke="#79c0c0" stroke-width="0.9" />
<line x1="832.7" y1="515.3" x2="847.4" y2="513.8" stroke="#1f4f55" stroke-width="1.1" />
<line x1="840.3" y1="523.0" x2="840.1" y2="506.4" stroke="#79c0c0" stroke-width="0.9" />
<line x1="840.1" y1="506.4" x2="854.5" y2="504.5" stroke="#1f4f55" stroke-width="1.1" />
<line x1="847.4" y1="513.8" x2="847.5" y2="497.5" stroke="#79c0c0" stroke-width="0.9" />
<line x1="847.5" y1="497.5" x2="861.6" y2="495.2" stroke="#1f4f55" stroke-width="1.1" />
<line x1="854.5" y1="504.5" x2="854.9" y2="488.6" stroke="#79c0c0" stroke-width="0.9" />
<line x1="854.9" y1="488.6" x2="868.7" y2="486.0" stroke="#1f4f55" stroke-width="1.1" />
<line x1="861.6" y1="495.2" x2="862.3" y2="479.7" stroke="#79c0c0" stroke-width="0.9" />
<line x1="862.3" y1="479.7" x2="875.8" y2="476.8" stroke="#1f4f55" stroke-width="1.1" />
<line x1="868.7" y1="486.0" x2="869.8" y2="470.8" stroke="#79c0c0" stroke-width="0.9" />
<line x1="869.8" y1="470.8" x2="882.8" y2="467.5" stroke="#1f4f55" stroke-width="1.1" />
<line x1="875.8" y1="476.8" x2="877.2" y2="461.8" stroke="#79c0c0" stroke-width="0.9" />
<line x1="877.2" y1="461.8" x2="889.9" y2="458.2" stroke="#1f4f55" stroke-width="1.1" />
<line x1="882.8" y1="467.5" x2="884.6" y2="452.9" stroke="#79c0c0" stroke-width="0.9" />
<line x1="884.6" y1="452.9" x2="897.0" y2="449.0" stroke="#1f4f55" stroke-width="1.1" />
<line x1="889.9" y1="458.2" x2="892.0" y2="444.0" stroke="#79c0c0" stroke-width="0.9" />
<line x1="812.0" y1="560.0" x2="897.0" y2="449.0" stroke="#1f4f55" stroke-width="1.2" />
<line x1="806.0" y1="552.0" x2="811.0" y2="578.0" stroke="#2b6e76" stroke-width="2.6" />
<line x1="806.0" y1="552.0" x2="811.0" y2="578.0" stroke="#3a8c90" stroke-width="1.6" />
<line x1="820.0" y1="538.0" x2="824.0" y2="574.0" stroke="#2b6e76" stroke-width="2.6" />
<line x1="820.0" y1="538.0" x2="824.0" y2="574.0" stroke="#3a8c90" stroke-width="1.6" />
<line x1="806.0" y1="552.0" x2="824.0" y2="574.0" stroke="#2b6e76" stroke-width="2.6" />
<line x1="806.0" y1="552.0" x2="824.0" y2="574.0" stroke="#3a8c90" stroke-width="1.6" />
<line x1="820.0" y1="538.0" x2="811.0" y2="578.0" stroke="#2b6e76" stroke-width="2.6" />
<line x1="820.0" y1="538.0" x2="811.0" y2="578.0" stroke="#3a8c90" stroke-width="1.6" />
<line x1="811.0" y1="578.0" x2="824.0" y2="574.0" stroke="#2b6e76" stroke-width="2.6" />
<line x1="811.0" y1="578.0" x2="824.0" y2="574.0" stroke="#3a8c90" stroke-width="1.6" />
<line x1="834.0" y1="522.0" x2="824.0" y2="560.0" stroke="#2b6e76" stroke-width="2.6" />
<line x1="834.0" y1="522.0" x2="824.0" y2="560.0" stroke="#3a8c90" stroke-width="1.6" />
<line x1="846.0" y1="508.0" x2="840.0" y2="540.0" stroke="#2b6e76" stroke-width="2.6" />
<line x1="846.0" y1="508.0" x2="840.0" y2="540.0" stroke="#3a8c90" stroke-width="1.6" />
<line x1="858.0" y1="494.0" x2="852.0" y2="525.0" stroke="#2b6e76" stroke-width="2.6" />
<line x1="858.0" y1="494.0" x2="852.0" y2="525.0" stroke="#3a8c90" stroke-width="1.6" />
<line x1="834.0" y1="522.0" x2="852.0" y2="525.0" stroke="#2b6e76" stroke-width="2.6" />
<line x1="834.0" y1="522.0" x2="852.0" y2="525.0" stroke="#3a8c90" stroke-width="1.6" />
<line x1="808.0" y1="562.0" x2="822.0" y2="556.0" stroke="#2b6e76" stroke-width="2.6" />
<line x1="808.0" y1="562.0" x2="822.0" y2="556.0" stroke="#3a8c90" stroke-width="1.6" />
<polygon points="738.0,455.0 752.0,451.0 784.0,454.0 798.0,462.0 804.0,478.0 803.0,495.0 786.0,495.0 785.0,482.0 778.0,476.0 742.0,476.0" fill="#708cb9" stroke="#4d5f80" stroke-width="0.7" />
<line x1="781.0" y1="455.0" x2="781.0" y2="476.0" stroke="#4d5f80" stroke-width="0.6" />
<polyline points="786.0,482.0 794.0,474.0 803.0,478.0" fill="none" stroke="#4d5f80" stroke-width="0.6" />
<ellipse cx="744" cy="465.500" rx="6.500" ry="11" fill="#7f9ccb" stroke="#55739f" stroke-width="0.7"/>
<ellipse cx="790" cy="404" rx="9.500" ry="10.500" fill="#7090c4" stroke="#55739f" stroke-width="0.600"/>
<line x1="797.0" y1="397.0" x2="798.0" y2="412.0" stroke="#f2f2f2" stroke-width="1.6" />
<ellipse cx="789" cy="503" rx="13" ry="13" fill="#e6e6e6" stroke="#b0b0b0" stroke-width="0.8"/><circle cx="788" cy="502" r="6" fill="none" stroke="#bdbdbd"/><rect x="784" y="514" width="16" height="8" fill="#efefef" stroke="#c4c4c4" stroke-width="0.5"/>
<rect x="777" y="524" width="14" height="6" fill="none" stroke="#7ec3d6" stroke-width="1" stroke-dasharray="2 1.5"/>
<polyline points="884.0,462.0 950.0,463.0 953.0,468.0 948.0,478.0" fill="none" stroke="#7d6e28" stroke-width="3.5999999999999996" stroke-linejoin="round" stroke-linecap="round"/>
<polyline points="884.0,462.0 950.0,463.0 953.0,468.0 948.0,478.0" fill="none" stroke="#cdb850" stroke-width="2.4" stroke-linejoin="round" stroke-linecap="round"/>
<polyline points="890.0,473.5 975.0,475.0 1070.0,478.5 1100.0,479.0" fill="none" stroke="#7d6e28" stroke-width="3.4000000000000004" stroke-linejoin="round" stroke-linecap="round"/>
<polyline points="890.0,473.5 975.0,475.0 1070.0,478.5 1100.0,479.0" fill="none" stroke="#cdb850" stroke-width="2.2" stroke-linejoin="round" stroke-linecap="round"/>
<polyline points="973.0,474.0 974.0,468.0 978.0,466.0 1070.0,468.0 1100.0,469.0" fill="none" stroke="#7d6e28" stroke-width="3.5999999999999996" stroke-linejoin="round" stroke-linecap="round"/>
<polyline points="973.0,474.0 974.0,468.0 978.0,466.0 1070.0,468.0 1100.0,469.0" fill="none" stroke="#cdb850" stroke-width="2.4" stroke-linejoin="round" stroke-linecap="round"/>
<polyline points="1024.0,468.0 1025.0,500.0" fill="none" stroke="#7d6e28" stroke-width="3.5999999999999996" stroke-linejoin="round" stroke-linecap="round"/>
<polyline points="1024.0,468.0 1025.0,500.0" fill="none" stroke="#cdb850" stroke-width="2.4" stroke-linejoin="round" stroke-linecap="round"/>
<polyline points="856.0,502.5 929.0,509.5" fill="none" stroke="#7d6e28" stroke-width="8.4" stroke-linejoin="round" stroke-linecap="round"/>
<polyline points="856.0,502.5 929.0,509.5" fill="none" stroke="#cdb850" stroke-width="7.2" stroke-linejoin="round" stroke-linecap="round"/>
<line x1="856.0" y1="500.2" x2="929.0" y2="507.2" stroke="#efe08a" stroke-width="1.4" />
<polyline points="846.0,500.0 839.0,514.0 838.0,552.0 846.0,558.0" fill="none" stroke="#7d6e28" stroke-width="3.5999999999999996" stroke-linejoin="round" stroke-linecap="round"/>
<polyline points="846.0,500.0 839.0,514.0 838.0,552.0 846.0,558.0" fill="none" stroke="#cdb850" stroke-width="2.4" stroke-linejoin="round" stroke-linecap="round"/>
<polyline points="860.0,512.0 857.0,540.0 864.0,560.0 871.0,545.0 872.0,520.0" fill="none" stroke="#7d6e28" stroke-width="3.5999999999999996" stroke-linejoin="round" stroke-linecap="round"/>
<polyline points="860.0,512.0 857.0,540.0 864.0,560.0 871.0,545.0 872.0,520.0" fill="none" stroke="#cdb850" stroke-width="2.4" stroke-linejoin="round" stroke-linecap="round"/>
<polyline points="850.0,520.0 868.0,524.0" fill="none" stroke="#7d6e28" stroke-width="3.2" stroke-linejoin="round" stroke-linecap="round"/>
<polyline points="850.0,520.0 868.0,524.0" fill="none" stroke="#cdb850" stroke-width="2" stroke-linejoin="round" stroke-linecap="round"/>
<polyline points="842.0,535.0 862.0,538.0" fill="none" stroke="#7d6e28" stroke-width="3.2" stroke-linejoin="round" stroke-linecap="round"/>
<polyline points="842.0,535.0 862.0,538.0" fill="none" stroke="#cdb850" stroke-width="2" stroke-linejoin="round" stroke-linecap="round"/>
<polyline points="1001.0,466.0 990.0,496.0 975.0,532.0 960.0,569.0" fill="none" stroke="#7d6e28" stroke-width="3.5999999999999996" stroke-linejoin="round" stroke-linecap="round"/>
<polyline points="1001.0,466.0 990.0,496.0 975.0,532.0 960.0,569.0" fill="none" stroke="#cdb850" stroke-width="2.4" stroke-linejoin="round" stroke-linecap="round"/>
<polyline points="1004.0,470.0 994.0,500.0 980.0,534.0 966.0,570.0" fill="none" stroke="#7d6e28" stroke-width="2.8" stroke-linejoin="round" stroke-linecap="round"/>
<polyline points="1004.0,470.0 994.0,500.0 980.0,534.0 966.0,570.0" fill="none" stroke="#cdb850" stroke-width="1.6" stroke-linejoin="round" stroke-linecap="round"/>
<line x1="999.0" y1="471.1" x2="1003.5" y2="472.6" stroke="#7d6e28" stroke-width="1" />
<line x1="994.4" y1="482.6" x2="998.9" y2="484.1" stroke="#7d6e28" stroke-width="1" />
<line x1="989.8" y1="494.0" x2="994.3" y2="495.5" stroke="#7d6e28" stroke-width="1" />
<line x1="985.3" y1="505.5" x2="989.8" y2="507.0" stroke="#7d6e28" stroke-width="1" />
<line x1="980.7" y1="516.9" x2="985.2" y2="518.4" stroke="#7d6e28" stroke-width="1" />
<line x1="976.2" y1="528.4" x2="980.7" y2="529.9" stroke="#7d6e28" stroke-width="1" />
<line x1="971.6" y1="539.8" x2="976.1" y2="541.3" stroke="#7d6e28" stroke-width="1" />
<line x1="967.1" y1="551.3" x2="971.6" y2="552.8" stroke="#7d6e28" stroke-width="1" />
<line x1="962.5" y1="562.7" x2="967.0" y2="564.2" stroke="#7d6e28" stroke-width="1" />
<polyline points="975.0,509.0 986.0,512.0 993.0,525.0 993.0,563.0 985.0,566.0" fill="none" stroke="#7d6e28" stroke-width="3.8" stroke-linejoin="round" stroke-linecap="round"/>
<polyline points="975.0,509.0 986.0,512.0 993.0,525.0 993.0,563.0 985.0,566.0" fill="none" stroke="#cdb850" stroke-width="2.6" stroke-linejoin="round" stroke-linecap="round"/>
<polyline points="958.0,569.0 992.0,567.0" fill="none" stroke="#7d6e28" stroke-width="3.8" stroke-linejoin="round" stroke-linecap="round"/>
<polyline points="958.0,569.0 992.0,567.0" fill="none" stroke="#cdb850" stroke-width="2.6" stroke-linejoin="round" stroke-linecap="round"/>
<polyline points="992.0,567.0 994.0,590.0 988.0,596.0 980.0,610.0" fill="none" stroke="#7d6e28" stroke-width="3.8" stroke-linejoin="round" stroke-linecap="round"/>
<polyline points="992.0,567.0 994.0,590.0 988.0,596.0 980.0,610.0" fill="none" stroke="#cdb850" stroke-width="2.6" stroke-linejoin="round" stroke-linecap="round"/>
<polyline points="1005.0,528.0 1004.0,560.0 1010.0,562.0" fill="none" stroke="#7d6e28" stroke-width="3.4000000000000004" stroke-linejoin="round" stroke-linecap="round"/>
<polyline points="1005.0,528.0 1004.0,560.0 1010.0,562.0" fill="none" stroke="#cdb850" stroke-width="2.2" stroke-linejoin="round" stroke-linecap="round"/>
<polyline points="1012.0,497.0 1008.0,518.0 1020.0,520.0" fill="none" stroke="#7d6e28" stroke-width="3.2" stroke-linejoin="round" stroke-linecap="round"/>
<polyline points="1012.0,497.0 1008.0,518.0 1020.0,520.0" fill="none" stroke="#cdb850" stroke-width="2" stroke-linejoin="round" stroke-linecap="round"/>
<polyline points="940.0,478.0 936.0,492.0 946.0,500.0" fill="none" stroke="#7d6e28" stroke-width="3.2" stroke-linejoin="round" stroke-linecap="round"/>
<polyline points="940.0,478.0 936.0,492.0 946.0,500.0" fill="none" stroke="#cdb850" stroke-width="2" stroke-linejoin="round" stroke-linecap="round"/>
<line x1="875.0" y1="480.0" x2="877.0" y2="505.0" stroke="#2f8088" stroke-width="2.4" />
<line x1="872.0" y1="505.0" x2="880.0" y2="506.0" stroke="#2f8088" stroke-width="2" />
<line x1="898.0" y1="482.0" x2="900.0" y2="508.0" stroke="#2f8088" stroke-width="2.4" />
<line x1="895.0" y1="508.0" x2="903.0" y2="509.0" stroke="#2f8088" stroke-width="2" />
<line x1="912.0" y1="483.0" x2="914.0" y2="510.0" stroke="#2f8088" stroke-width="2.4" />
<line x1="909.0" y1="510.0" x2="917.0" y2="511.0" stroke="#2f8088" stroke-width="2" />
<line x1="948.0" y1="490.0" x2="950.0" y2="520.0" stroke="#2f8088" stroke-width="2.4" />
<line x1="945.0" y1="520.0" x2="953.0" y2="521.0" stroke="#2f8088" stroke-width="2" />
<line x1="960.0" y1="490.0" x2="962.0" y2="522.0" stroke="#2f8088" stroke-width="2.4" />
<line x1="957.0" y1="522.0" x2="965.0" y2="523.0" stroke="#2f8088" stroke-width="2" />
<line x1="1018.0" y1="490.0" x2="1020.0" y2="510.0" stroke="#2f8088" stroke-width="2.4" />
<line x1="1015.0" y1="510.0" x2="1023.0" y2="511.0" stroke="#2f8088" stroke-width="2" />
<line x1="1030.0" y1="500.0" x2="1032.0" y2="530.0" stroke="#2f8088" stroke-width="2.4" />
<line x1="1027.0" y1="530.0" x2="1035.0" y2="531.0" stroke="#2f8088" stroke-width="2" />
<line x1="1060.0" y1="480.0" x2="1062.0" y2="520.0" stroke="#2f8088" stroke-width="2.4" />
<line x1="1057.0" y1="520.0" x2="1065.0" y2="521.0" stroke="#2f8088" stroke-width="2" />
<ellipse cx="878" cy="478" rx="4" ry="2" fill="none" stroke="#555" stroke-width="0.9"/>
<ellipse cx="900" cy="480" rx="4" ry="2" fill="none" stroke="#555" stroke-width="0.9"/>
<ellipse cx="915" cy="481" rx="4" ry="2" fill="none" stroke="#555" stroke-width="0.9"/>
<ellipse cx="943" cy="484" rx="4" ry="2" fill="none" stroke="#555" stroke-width="0.9"/>
<ellipse cx="965" cy="486" rx="4" ry="2" fill="none" stroke="#555" stroke-width="0.9"/>
<rect x="890" y="468" width="6" height="26" rx="3" fill="#cfd4d8"/>
<rect x="905" y="468" width="6" height="26" rx="3" fill="#cfd4d8"/>
<rect x="955" y="468" width="6" height="26" rx="3" fill="#cfd4d8"/>
<rect x="968" y="468" width="6" height="26" rx="3" fill="#cfd4d8"/>
<rect x="1050" y="468" width="6" height="26" rx="3" fill="#cfd4d8"/>
<line x1="966.0" y1="575.0" x2="970.0" y2="612.0" stroke="#2f8088" stroke-width="2.2" />
<line x1="963.0" y1="612.0" x2="973.0" y2="613.0" stroke="#2f8088" stroke-width="2.4" />
<polygon points="842.0,545.0 884.0,548.0 876.0,560.0 836.0,557.0" fill="#d2d2d2" stroke="#8a8a8a" stroke-width="0.6" />
<polygon points="996.0,620.0 1012.0,560.0 1034.0,478.0 1124.0,478.0 1124.0,628.0" fill="#7094c2" />
<polygon points="996.0,620.0 1012.0,560.0 1016.0,562.0 1002.0,621.0" fill="#9ab8e0" />
<polygon points="1058.0,478.0 1124.0,478.0 1124.0,500.0 1062.0,498.0" fill="#b9c0c8" />
<polygon points="1056.0,520.0 1106.0,521.0 1106.0,529.0 1055.0,528.0" fill="#c4c8cc" />
<polygon points="1050.0,564.0 1094.0,565.0 1094.0,579.0 1048.0,578.0" fill="#c4c8cc" />
<polygon points="1100.0,478.0 1108.0,478.0 1108.0,622.0 1100.0,622.0" fill="#aab4c0" />
<polygon points="1070.0,497.0 1093.0,497.0 1093.0,512.0 1070.0,512.0" fill="#7094c2" stroke="#2f4260" stroke-width="0.9" />
<polygon points="1070.0,497.0 1074.0,493.4 1095.4,493.4 1093.0,497.0" fill="#8cabd8" stroke="#2f4260" stroke-width="0.8" />
<polygon points="1108.0,505.0 1124.0,505.0 1124.0,530.0 1108.0,530.0" fill="#7094c2" stroke="#2f4260" stroke-width="0.9" />
<polygon points="1108.0,505.0 1111.0,502.3 1125.8,502.3 1124.0,505.0" fill="#8cabd8" stroke="#2f4260" stroke-width="0.8" />
<polygon points="1028.5,487.5 1059.5,487.5 1059.5,522.0 1028.5,522.0" fill="#7094c2" stroke="#2f4260" stroke-width="0.9" />
<polygon points="1028.5,487.5 1034.5,482.1 1063.1,482.1 1059.5,487.5" fill="#8cabd8" stroke="#2f4260" stroke-width="0.8" />
<polygon points="1065.0,530.0 1100.0,530.0 1100.0,560.0 1065.0,560.0" fill="#7094c2" stroke="#2f4260" stroke-width="0.9" />
<polygon points="1065.0,530.0 1070.0,525.5 1103.0,525.5 1100.0,530.0" fill="#8cabd8" stroke="#2f4260" stroke-width="0.8" />
<polygon points="1108.0,545.0 1124.0,545.0 1124.0,575.0 1108.0,575.0" fill="#7094c2" stroke="#2f4260" stroke-width="0.9" />
<polygon points="1108.0,545.0 1111.0,542.3 1125.8,542.3 1124.0,545.0" fill="#8cabd8" stroke="#2f4260" stroke-width="0.8" />
<polygon points="1017.7,523.6 1054.2,523.6 1054.2,565.1 1017.7,565.1" fill="#7094c2" stroke="#2f4260" stroke-width="0.9" />
<polygon points="1017.7,523.6 1024.7,517.3 1058.4,517.3 1054.2,523.6" fill="#8cabd8" stroke="#2f4260" stroke-width="0.8" />
<polygon points="1052.0,580.0 1090.0,580.0 1090.0,610.0 1052.0,610.0" fill="#7094c2" stroke="#2f4260" stroke-width="0.9" />
<polygon points="1052.0,580.0 1057.0,575.5 1093.0,575.5 1090.0,580.0" fill="#8cabd8" stroke="#2f4260" stroke-width="0.8" />
<polygon points="1108.0,590.0 1124.0,590.0 1124.0,620.0 1108.0,620.0" fill="#7094c2" stroke="#2f4260" stroke-width="0.9" />
<polygon points="1108.0,590.0 1111.0,587.3 1125.8,587.3 1124.0,590.0" fill="#8cabd8" stroke="#2f4260" stroke-width="0.8" />
<polygon points="1008.0,566.7 1046.0,566.7 1046.0,620.7 1008.0,620.7" fill="#7094c2" stroke="#2f4260" stroke-width="0.9" />
<polygon points="1008.0,566.7 1017.0,558.6 1051.4,558.6 1046.0,566.7" fill="#8cabd8" stroke="#2f4260" stroke-width="0.8" />
<rect x="1093" y="575" width="13" height="50" rx="3" fill="#7c9fd0" stroke="#2f4260" stroke-width="0.900"/>
<line x1="1096.5" y1="577.0" x2="1096.5" y2="623.0" stroke="#a9c3e6" stroke-width="1.6" />
<polyline points="1046.0,510.0 1062.0,508.0 1066.0,524.0 1100.0,526.0" fill="none" stroke="#2a3a52" stroke-width="2.2" stroke-linejoin="round"/>
<polyline points="1046.0,510.0 1062.0,508.0 1066.0,524.0 1100.0,526.0" fill="none" stroke="#7d9cc8" stroke-width="0.7" stroke-linejoin="round"/>
<polyline points="1040.0,548.0 1058.0,546.0 1062.0,562.0 1104.0,564.0" fill="none" stroke="#2a3a52" stroke-width="2.2" stroke-linejoin="round"/>
<polyline points="1040.0,548.0 1058.0,546.0 1062.0,562.0 1104.0,564.0" fill="none" stroke="#7d9cc8" stroke-width="0.7" stroke-linejoin="round"/>
<polyline points="1048.0,586.0 1046.0,608.0 1092.0,611.0" fill="none" stroke="#2a3a52" stroke-width="2.2" stroke-linejoin="round"/>
<polyline points="1048.0,586.0 1046.0,608.0 1092.0,611.0" fill="none" stroke="#7d9cc8" stroke-width="0.7" stroke-linejoin="round"/>
<polyline points="1068.0,515.0 1068.0,548.0" fill="none" stroke="#2a3a52" stroke-width="2.2" stroke-linejoin="round"/>
<polyline points="1068.0,515.0 1068.0,548.0" fill="none" stroke="#7d9cc8" stroke-width="0.7" stroke-linejoin="round"/>
<polyline points="1104.0,490.0 1104.0,574.0" fill="none" stroke="#2a3a52" stroke-width="2.2" stroke-linejoin="round"/>
<polyline points="1104.0,490.0 1104.0,574.0" fill="none" stroke="#7d9cc8" stroke-width="0.7" stroke-linejoin="round"/>
<polyline points="1060.0,478.0 1062.0,496.0" fill="none" stroke="#2a3a52" stroke-width="2.2" stroke-linejoin="round"/>
<polyline points="1060.0,478.0 1062.0,496.0" fill="none" stroke="#7d9cc8" stroke-width="0.7" stroke-linejoin="round"/>
<polyline points="1082.0,480.0 1084.0,497.0" fill="none" stroke="#2a3a52" stroke-width="2.2" stroke-linejoin="round"/>
<polyline points="1082.0,480.0 1084.0,497.0" fill="none" stroke="#7d9cc8" stroke-width="0.7" stroke-linejoin="round"/>
<polyline points="1046.0,522.0 1046.0,528.0" fill="none" stroke="#2a3a52" stroke-width="2.2" stroke-linejoin="round"/>
<polyline points="1046.0,522.0 1046.0,528.0" fill="none" stroke="#7d9cc8" stroke-width="0.7" stroke-linejoin="round"/>
<polyline points="1086.0,536.0 1108.0,538.0" fill="none" stroke="#2a3a52" stroke-width="2.2" stroke-linejoin="round"/>
<polyline points="1086.0,536.0 1108.0,538.0" fill="none" stroke="#7d9cc8" stroke-width="0.7" stroke-linejoin="round"/>
<polyline points="1086.0,598.0 1108.0,600.0" fill="none" stroke="#2a3a52" stroke-width="2.2" stroke-linejoin="round"/>
<polyline points="1086.0,598.0 1108.0,600.0" fill="none" stroke="#7d9cc8" stroke-width="0.7" stroke-linejoin="round"/>
<polyline points="1058.0,560.0 1058.0,580.0" fill="none" stroke="#2a3a52" stroke-width="2.2" stroke-linejoin="round"/>
<polyline points="1058.0,560.0 1058.0,580.0" fill="none" stroke="#7d9cc8" stroke-width="0.7" stroke-linejoin="round"/>
<polyline points="1074.0,562.0 1074.0,580.0" fill="none" stroke="#2a3a52" stroke-width="2.2" stroke-linejoin="round"/>
<polyline points="1074.0,562.0 1074.0,580.0" fill="none" stroke="#7d9cc8" stroke-width="0.7" stroke-linejoin="round"/>
<polyline points="1068.0,530.0 1108.0,528.0 1112.0,534.0" fill="none" stroke="#7d6e28" stroke-width="3.2" stroke-linejoin="round" stroke-linecap="round"/>
<polyline points="1068.0,530.0 1108.0,528.0 1112.0,534.0" fill="none" stroke="#cdb850" stroke-width="2" stroke-linejoin="round" stroke-linecap="round"/>
<polyline points="1106.0,545.0 1150.0,546.0" fill="none" stroke="#7d6e28" stroke-width="3.4000000000000004" stroke-linejoin="round" stroke-linecap="round"/>
<polyline points="1106.0,545.0 1150.0,546.0" fill="none" stroke="#cdb850" stroke-width="2.2" stroke-linejoin="round" stroke-linecap="round"/>
<polyline points="1100.0,498.0 1100.0,520.0" fill="none" stroke="#7d6e28" stroke-width="3.4000000000000004" stroke-linejoin="round" stroke-linecap="round"/>
<polyline points="1100.0,498.0 1100.0,520.0" fill="none" stroke="#cdb850" stroke-width="2.2" stroke-linejoin="round" stroke-linecap="round"/>
<polyline points="1099.0,555.0 1100.0,575.0" fill="none" stroke="#7d6e28" stroke-width="3.4000000000000004" stroke-linejoin="round" stroke-linecap="round"/>
<polyline points="1099.0,555.0 1100.0,575.0" fill="none" stroke="#cdb850" stroke-width="2.2" stroke-linejoin="round" stroke-linecap="round"/>
<polyline points="1105.0,578.0 1140.0,580.0" fill="none" stroke="#7d6e28" stroke-width="3.5999999999999996" stroke-linejoin="round" stroke-linecap="round"/>
<polyline points="1105.0,578.0 1140.0,580.0" fill="none" stroke="#cdb850" stroke-width="2.4" stroke-linejoin="round" stroke-linecap="round"/>
<polyline points="1104.0,509.0 1150.0,507.0" fill="none" stroke="#7d6e28" stroke-width="3.2" stroke-linejoin="round" stroke-linecap="round"/>
<polyline points="1104.0,509.0 1150.0,507.0" fill="none" stroke="#cdb850" stroke-width="2" stroke-linejoin="round" stroke-linecap="round"/>
<polyline points="1075.0,473.0 1135.0,471.0" fill="none" stroke="#7d6e28" stroke-width="3.0" stroke-linejoin="round" stroke-linecap="round"/>
<polyline points="1075.0,473.0 1135.0,471.0" fill="none" stroke="#cdb850" stroke-width="1.8" stroke-linejoin="round" stroke-linecap="round"/>
<line x1="1128.0" y1="450.0" x2="1130.0" y2="612.0" stroke="#3f9c9c" stroke-width="2.6" />
<line x1="1134.0" y1="450.0" x2="1136.0" y2="612.0" stroke="#3f9c9c" stroke-width="2.6" />
<line x1="1145.0" y1="520.0" x2="1148.0" y2="608.0" stroke="#3f9c9c" stroke-width="3" />
<line x1="1156.0" y1="540.0" x2="1158.0" y2="615.0" stroke="#3f9c9c" stroke-width="2.4" />
<line x1="1162.0" y1="540.0" x2="1164.0" y2="615.0" stroke="#58a8b0" stroke-width="2" />
<polyline points="1128.0,612.0 1130.0,620.0 1164.0,622.0 1166.0,612.0" fill="none" stroke="#3f9c9c" stroke-width="2.4" />
<line x1="1137.0" y1="560.0" x2="1139.0" y2="628.0" stroke="#a03030" stroke-width="1" />
<polygon points="1145.0,528.0 1153.0,528.0 1154.0,558.0 1147.0,558.0" fill="#6fc3ea" />
<rect x="1146" y="563" width="5" height="16" fill="#d8c254" stroke="#9f8c2c" stroke-width="0.6"/>
<polygon points="1126.0,446.0 1172.0,450.0 1170.0,612.0 1126.0,616.0" fill="#aab9bd" />
<line x1="1128.0" y1="448.0" x2="1129.5" y2="614.0" stroke="#3a9494" stroke-width="3.4" />
<line x1="1133.5" y1="448.0" x2="1135.0" y2="614.0" stroke="#2b6e76" stroke-width="2.4" />
<line x1="1139.0" y1="448.0" x2="1140.5" y2="614.0" stroke="#58b5c8" stroke-width="2" />
<line x1="1150.0" y1="530.0" x2="1151.5" y2="614.0" stroke="#3a9494" stroke-width="3" />
<line x1="1156.0" y1="530.0" x2="1157.5" y2="614.0" stroke="#2b6e76" stroke-width="2.4" />
<line x1="1161.0" y1="530.0" x2="1162.5" y2="614.0" stroke="#4aa8b0" stroke-width="2.2" />
<line x1="1166.0" y1="530.0" x2="1167.5" y2="614.0" stroke="#3a9494" stroke-width="2" />
<line x1="1124.0" y1="462.0" x2="1150.0" y2="463.0" stroke="#b9a544" stroke-width="1.6" />
<line x1="1124.0" y1="474.0" x2="1150.0" y2="475.0" stroke="#b9a544" stroke-width="1.6" />
<line x1="1124.0" y1="486.0" x2="1150.0" y2="487.0" stroke="#b9a544" stroke-width="1.6" />
<line x1="1124.0" y1="507.0" x2="1150.0" y2="508.0" stroke="#b9a544" stroke-width="1.6" />
<line x1="1124.0" y1="520.0" x2="1150.0" y2="521.0" stroke="#b9a544" stroke-width="1.6" />
<line x1="1124.0" y1="546.0" x2="1150.0" y2="547.0" stroke="#b9a544" stroke-width="1.6" />
<line x1="1124.0" y1="560.0" x2="1150.0" y2="561.0" stroke="#b9a544" stroke-width="1.6" />
<line x1="1124.0" y1="580.0" x2="1150.0" y2="581.0" stroke="#b9a544" stroke-width="1.6" />
<line x1="1124.0" y1="596.0" x2="1150.0" y2="597.0" stroke="#b9a544" stroke-width="1.6" />
<line x1="1126.0" y1="455.0" x2="1170.0" y2="457.0" stroke="#2f5f66" stroke-width="1.2" />
<line x1="1126.0" y1="468.0" x2="1170.0" y2="470.0" stroke="#2f5f66" stroke-width="1.2" />
<line x1="1126.0" y1="500.0" x2="1170.0" y2="502.0" stroke="#2f5f66" stroke-width="1.2" />
<line x1="1126.0" y1="534.0" x2="1170.0" y2="536.0" stroke="#2f5f66" stroke-width="1.2" />
<line x1="1126.0" y1="572.0" x2="1170.0" y2="574.0" stroke="#2f5f66" stroke-width="1.2" />
<line x1="1126.0" y1="604.0" x2="1170.0" y2="606.0" stroke="#2f5f66" stroke-width="1.2" />
<polygon points="1143.0,525.0 1153.0,525.0 1154.0,560.0 1146.0,560.0" fill="#5bbcec" />
<polygon points="1146.0,562.0 1152.0,562.0 1152.0,582.0 1146.0,582.0" fill="#c9b44e" stroke="#7d6e28" stroke-width="0.6" />
<polyline points="1127.0,612.0 1130.0,621.0 1165.0,623.0 1168.0,612.0" fill="none" stroke="#3a9494" stroke-width="2.6" />
<line x1="1137.0" y1="560.0" x2="1139.0" y2="628.0" stroke="#a03030" stroke-width="1" />
<polygon points="1122.0,440.0 1184.0,446.0 1180.0,472.0 1122.0,462.0" fill="#4e8f92" />
<line x1="1124.0" y1="441.0" x2="1132.0" y2="468.0" stroke="#1f4f55" stroke-width="1.4" />
<line x1="1132.0" y1="442.0" x2="1124.0" y2="466.0" stroke="#7cc4c4" stroke-width="1.2" />
<line x1="1133.0" y1="441.8" x2="1141.0" y2="468.5" stroke="#1f4f55" stroke-width="1.4" />
<line x1="1141.0" y1="442.8" x2="1133.0" y2="466.5" stroke="#7cc4c4" stroke-width="1.2" />
<line x1="1142.0" y1="442.6" x2="1150.0" y2="469.0" stroke="#1f4f55" stroke-width="1.4" />
<line x1="1150.0" y1="443.6" x2="1142.0" y2="467.0" stroke="#7cc4c4" stroke-width="1.2" />
<line x1="1151.0" y1="443.4" x2="1159.0" y2="469.5" stroke="#1f4f55" stroke-width="1.4" />
<line x1="1159.0" y1="444.4" x2="1151.0" y2="467.5" stroke="#7cc4c4" stroke-width="1.2" />
<line x1="1160.0" y1="444.2" x2="1168.0" y2="470.0" stroke="#1f4f55" stroke-width="1.4" />
<line x1="1168.0" y1="445.2" x2="1160.0" y2="468.0" stroke="#7cc4c4" stroke-width="1.2" />
<line x1="1169.0" y1="445.0" x2="1177.0" y2="470.5" stroke="#1f4f55" stroke-width="1.4" />
<line x1="1177.0" y1="446.0" x2="1169.0" y2="468.5" stroke="#7cc4c4" stroke-width="1.2" />
<line x1="1178.0" y1="445.8" x2="1186.0" y2="471.0" stroke="#1f4f55" stroke-width="1.4" />
<line x1="1186.0" y1="446.8" x2="1178.0" y2="469.0" stroke="#7cc4c4" stroke-width="1.2" />
<polygon points="1125.0,618.0 1172.0,612.0 1172.0,632.0 1125.0,632.0" fill="#cfcfcf" stroke="#9a9a9a" stroke-width="0.5" />
<line x1="1085.0" y1="488.0" x2="1100.0" y2="489.0" stroke="#2b6e76" stroke-width="1.4" />
<line x1="1087.6" y1="484.8" x2="1102.6" y2="485.8" stroke="#2b6e76" stroke-width="1.4" />
<line x1="1090.2" y1="481.6" x2="1105.2" y2="482.6" stroke="#2b6e76" stroke-width="1.4" />
<line x1="1092.8" y1="478.4" x2="1107.8" y2="479.4" stroke="#2b6e76" stroke-width="1.4" />
<line x1="1095.4" y1="475.2" x2="1110.4" y2="476.2" stroke="#2b6e76" stroke-width="1.4" />
<line x1="1098.0" y1="472.0" x2="1113.0" y2="473.0" stroke="#2b6e76" stroke-width="1.4" />
<line x1="1100.6" y1="468.8" x2="1115.6" y2="469.8" stroke="#2b6e76" stroke-width="1.4" />
<line x1="1103.2" y1="465.6" x2="1118.2" y2="466.6" stroke="#2b6e76" stroke-width="1.4" />
<line x1="1105.8" y1="462.4" x2="1120.8" y2="463.4" stroke="#2b6e76" stroke-width="1.4" />
<line x1="1084.0" y1="490.0" x2="1108.0" y2="458.0" stroke="#3f9c9c" stroke-width="2" />
<line x1="1100.0" y1="492.0" x2="1124.0" y2="460.0" stroke="#3f9c9c" stroke-width="2" />
<line x1="1150.0" y1="440.0" x2="1170.0" y2="470.0" stroke="#3f9c9c" stroke-width="2.2" />
<line x1="1170.0" y1="440.0" x2="1150.0" y2="470.0" stroke="#3f9c9c" stroke-width="2.2" />
<line x1="1135.0" y1="440.0" x2="1135.0" y2="470.0" stroke="#3f9c9c" stroke-width="2.2" />
<line x1="1150.0" y1="440.0" x2="1150.0" y2="470.0" stroke="#3f9c9c" stroke-width="2.2" />
<line x1="1128.0" y1="445.0" x2="1172.0" y2="448.0" stroke="#3f9c9c" stroke-width="2.2" />
<polygon points="1158.0,448.0 1170.0,460.0 1160.0,472.0" fill="none" stroke="#2b6e76" stroke-width="1.2" />
<polygon points="1142.0,470.0 1166.0,458.0 1182.0,462.0 1182.0,488.0 1160.0,490.0 1152.0,500.0 1140.0,500.0" fill="#708cb9" stroke="#4d5f80" stroke-width="0.7" />
<ellipse cx="1163" cy="516" rx="10" ry="9" fill="#f1f1f1" stroke="#9fb2cc" stroke-width="1"/><ellipse cx="1160" cy="517" rx="6.500" ry="6" fill="#e0e6ee" stroke="#8fa3c0" stroke-width="0.8"/>
<polygon points="1147.0,506.0 1158.0,503.0 1160.0,526.0 1149.0,528.0" fill="#e9e9e9" stroke="#bbb" stroke-width="0.5" />
<polygon points="995.5,620.5 1124.5,628.0 1124.5,652.5 995.5,645.5" fill="#b3b3b3" />
<line x1="995.5" y1="620.5" x2="1124.5" y2="628.0" stroke="#e4e4e4" stroke-width="1.4" />
<rect x="1004" y="630" width="6.500" height="3.500" fill="#dcdcdc" stroke="#8d8d8d" stroke-width="0.5"/>
<rect x="1041" y="632" width="6.500" height="3.500" fill="#dcdcdc" stroke="#8d8d8d" stroke-width="0.5"/>
<rect x="1079" y="634" width="6.500" height="3.500" fill="#dcdcdc" stroke="#8d8d8d" stroke-width="0.5"/>
<rect x="1116" y="636" width="6.500" height="3.500" fill="#dcdcdc" stroke="#8d8d8d" stroke-width="0.5"/>
<polygon points="988.0,616.0 997.0,616.0 997.0,636.0 988.0,636.0" fill="#c9c9c9" />
<polygon points="1003.0,647.0 1010.0,647.0 1011.0,705.0 1004.5,705.0" fill="#b9b9b9" />
<line x1="1010.0" y1="647.0" x2="1011.0" y2="705.0" stroke="#8c8c8c" stroke-width="0.7" />
<line x1="1003.5" y1="647.0" x2="1005.0" y2="705.0" stroke="#dadada" stroke-width="0.9" />
<polygon points="1040.0,647.0 1047.0,647.0 1048.0,705.0 1041.5,705.0" fill="#b9b9b9" />
<line x1="1047.0" y1="647.0" x2="1048.0" y2="705.0" stroke="#8c8c8c" stroke-width="0.7" />
<line x1="1040.5" y1="647.0" x2="1042.0" y2="705.0" stroke="#dadada" stroke-width="0.9" />
<polygon points="1077.0,647.0 1084.0,647.0 1085.0,705.0 1078.5,705.0" fill="#b9b9b9" />
<line x1="1084.0" y1="647.0" x2="1085.0" y2="705.0" stroke="#8c8c8c" stroke-width="0.7" />
<line x1="1077.5" y1="647.0" x2="1079.0" y2="705.0" stroke="#dadada" stroke-width="0.9" />
<polygon points="1113.0,647.0 1120.0,647.0 1121.0,705.0 1114.5,705.0" fill="#b9b9b9" />
<line x1="1120.0" y1="647.0" x2="1121.0" y2="705.0" stroke="#8c8c8c" stroke-width="0.7" />
<line x1="1113.5" y1="647.0" x2="1115.0" y2="705.0" stroke="#dadada" stroke-width="0.9" />
<polygon points="1008.0,648.0 1011.0,648.0 1012.0,675.0 1009.5,675.0" fill="#a9a9a9" />
<line x1="1011.0" y1="648.0" x2="1012.0" y2="675.0" stroke="#8c8c8c" stroke-width="0.7" />
<line x1="1008.5" y1="648.0" x2="1010.0" y2="675.0" stroke="#dadada" stroke-width="0.9" />
<polygon points="1014.0,648.0 1017.0,648.0 1018.0,675.0 1015.5,675.0" fill="#a9a9a9" />
<line x1="1017.0" y1="648.0" x2="1018.0" y2="675.0" stroke="#8c8c8c" stroke-width="0.7" />
<line x1="1014.5" y1="648.0" x2="1016.0" y2="675.0" stroke="#dadada" stroke-width="0.9" />
<polygon points="1046.0,648.0 1049.0,648.0 1050.0,675.0 1047.5,675.0" fill="#a9a9a9" />
<line x1="1049.0" y1="648.0" x2="1050.0" y2="675.0" stroke="#8c8c8c" stroke-width="0.7" />
<line x1="1046.5" y1="648.0" x2="1048.0" y2="675.0" stroke="#dadada" stroke-width="0.9" />
<polygon points="1050.0,648.0 1053.0,648.0 1054.0,675.0 1051.5,675.0" fill="#a9a9a9" />
<line x1="1053.0" y1="648.0" x2="1054.0" y2="675.0" stroke="#8c8c8c" stroke-width="0.7" />
<line x1="1050.5" y1="648.0" x2="1052.0" y2="675.0" stroke="#dadada" stroke-width="0.9" />
<polygon points="1142.0,632.0 1149.0,632.0 1150.0,686.0 1143.5,686.0" fill="#b9b9b9" />
<line x1="1149.0" y1="632.0" x2="1150.0" y2="686.0" stroke="#8c8c8c" stroke-width="0.7" />
<line x1="1142.5" y1="632.0" x2="1144.0" y2="686.0" stroke="#dadada" stroke-width="0.9" />
<polygon points="1160.0,632.0 1167.0,632.0 1168.0,686.0 1161.5,686.0" fill="#b9b9b9" />
<line x1="1167.0" y1="632.0" x2="1168.0" y2="686.0" stroke="#8c8c8c" stroke-width="0.7" />
<line x1="1160.5" y1="632.0" x2="1162.0" y2="686.0" stroke="#dadada" stroke-width="0.9" />
<polygon points="806.0,613.0 813.0,613.0 814.0,673.0 807.5,673.0" fill="#b9b9b9" />
<line x1="813.0" y1="613.0" x2="814.0" y2="673.0" stroke="#8c8c8c" stroke-width="0.7" />
<line x1="806.5" y1="613.0" x2="808.0" y2="673.0" stroke="#dadada" stroke-width="0.9" />
<polygon points="815.0,613.0 822.0,613.0 823.0,664.0 816.5,664.0" fill="#b9b9b9" />
<line x1="822.0" y1="613.0" x2="823.0" y2="664.0" stroke="#8c8c8c" stroke-width="0.7" />
<line x1="815.5" y1="613.0" x2="817.0" y2="664.0" stroke="#dadada" stroke-width="0.9" />
<polygon points="823.0,613.0 830.0,613.0 831.0,673.0 824.5,673.0" fill="#b9b9b9" />
<line x1="830.0" y1="613.0" x2="831.0" y2="673.0" stroke="#8c8c8c" stroke-width="0.7" />
<line x1="823.5" y1="613.0" x2="825.0" y2="673.0" stroke="#dadada" stroke-width="0.9" />
<polygon points="832.0,613.0 839.0,613.0 840.0,664.0 833.5,664.0" fill="#b9b9b9" />
<line x1="839.0" y1="613.0" x2="840.0" y2="664.0" stroke="#8c8c8c" stroke-width="0.7" />
<line x1="832.5" y1="613.0" x2="834.0" y2="664.0" stroke="#dadada" stroke-width="0.9" />
<polygon points="980.0,622.0 996.0,622.0 996.0,636.0 982.0,636.0" fill="#c9c9c9" stroke="#a0a0a0" stroke-width="0.5" />
<polygon points="744.0,369.5 885.0,297.5 883.5,310.0 749.5,382.0" fill="#87ab9a" stroke="#5c7d70" stroke-width="0.6" />
<line x1="744.0" y1="369.5" x2="885.0" y2="297.5" stroke="#a9d9c2" stroke-width="2.2" />
<line x1="745.0" y1="371.0" x2="885.0" y2="299.2" stroke="#4f6e62" stroke-width="0.6" />
<line x1="762.8" y1="360.1" x2="768.4" y2="372.6" stroke="#4f6e62" stroke-width="0.8" />
<line x1="786.8" y1="347.9" x2="791.2" y2="360.4" stroke="#4f6e62" stroke-width="0.8" />
<line x1="808.0" y1="337.1" x2="811.3" y2="349.6" stroke="#4f6e62" stroke-width="0.8" />
<line x1="829.1" y1="326.3" x2="831.4" y2="338.8" stroke="#4f6e62" stroke-width="0.8" />
<line x1="850.2" y1="315.5" x2="851.5" y2="328.0" stroke="#4f6e62" stroke-width="0.8" />
<line x1="871.4" y1="304.7" x2="871.6" y2="317.2" stroke="#4f6e62" stroke-width="0.8" />
<polygon points="884.0,298.0 977.0,298.5 977.0,307.5 1066.0,308.0 1066.0,317.0 1161.0,318.0 1158.0,338.0 879.0,311.0" fill="#8fbfa8" />
<polyline points="884.0,298.0 977.0,298.5 977.0,307.5 1066.0,308.0 1066.0,317.0 1161.0,318.0" fill="none" stroke="#5c7d70" stroke-width="0.9" />
<line x1="917.0" y1="299.0" x2="916.0" y2="314.7" stroke="#5c7d70" stroke-width="0.7" />
<line x1="947.0" y1="299.0" x2="946.0" y2="317.6" stroke="#5c7d70" stroke-width="0.7" />
<line x1="977.0" y1="308.0" x2="976.0" y2="320.5" stroke="#5c7d70" stroke-width="0.7" />
<line x1="1007.0" y1="308.0" x2="1006.0" y2="323.4" stroke="#5c7d70" stroke-width="0.7" />
<line x1="1036.0" y1="308.0" x2="1035.0" y2="326.2" stroke="#5c7d70" stroke-width="0.7" />
<line x1="1066.0" y1="317.0" x2="1065.0" y2="329.1" stroke="#5c7d70" stroke-width="0.7" />
<line x1="1096.0" y1="317.0" x2="1095.0" y2="332.0" stroke="#5c7d70" stroke-width="0.7" />
<line x1="1125.0" y1="317.0" x2="1124.0" y2="334.9" stroke="#5c7d70" stroke-width="0.7" />
<polygon points="1161.0,318.0 1192.0,409.0 1184.0,436.0 1158.0,338.0" fill="#9fd0b9" stroke="#5c7d70" stroke-width="0.7" />
<polygon points="1161.0,318.0 1192.0,409.0 1195.0,408.0 1164.0,318.0" fill="#9bd0b6" />
<line x1="1167.2" y1="336.2" x2="1163.2" y2="357.6" stroke="#5c7d70" stroke-width="0.7" />
<line x1="1173.4" y1="354.4" x2="1168.4" y2="377.2" stroke="#5c7d70" stroke-width="0.7" />
<line x1="1179.6" y1="372.6" x2="1173.6" y2="396.8" stroke="#5c7d70" stroke-width="0.7" />
<line x1="1185.8" y1="390.8" x2="1178.8" y2="416.4" stroke="#5c7d70" stroke-width="0.7" />
<polygon points="749.5,382.0 1184.0,436.0 1184.0,441.5 750.0,388.0" fill="#9c9c76" />
<polygon points="883.0,310.0 1158.0,338.0 1184.0,436.0 749.5,382.0" fill="#b3b48a" />
<line x1="872.7" y1="315.5" x2="1160.0" y2="345.5" stroke="#7f8160" stroke-width="0.9" />
<line x1="862.5" y1="321.1" x2="1162.0" y2="353.1" stroke="#7f8160" stroke-width="0.9" />
<line x1="852.2" y1="326.6" x2="1164.0" y2="360.6" stroke="#7f8160" stroke-width="0.9" />
<line x1="841.9" y1="332.2" x2="1166.0" y2="368.2" stroke="#7f8160" stroke-width="0.9" />
<line x1="831.7" y1="337.7" x2="1168.0" y2="375.7" stroke="#7f8160" stroke-width="0.9" />
<line x1="821.4" y1="343.2" x2="1170.0" y2="383.2" stroke="#7f8160" stroke-width="0.9" />
<line x1="811.1" y1="348.8" x2="1172.0" y2="390.8" stroke="#7f8160" stroke-width="0.9" />
<line x1="800.8" y1="354.3" x2="1174.0" y2="398.3" stroke="#7f8160" stroke-width="0.9" />
<line x1="790.6" y1="359.8" x2="1176.0" y2="405.8" stroke="#7f8160" stroke-width="0.9" />
<line x1="780.3" y1="365.4" x2="1178.0" y2="413.4" stroke="#7f8160" stroke-width="0.9" />
<line x1="770.0" y1="370.9" x2="1180.0" y2="420.9" stroke="#7f8160" stroke-width="0.9" />
<line x1="759.8" y1="376.5" x2="1182.0" y2="428.5" stroke="#7f8160" stroke-width="0.9" />
<line x1="1019.5" y1="321.0" x2="966.0" y2="408.0" stroke="#6f6c50" stroke-width="0.8" />
<line x1="1085.0" y1="383.0" x2="1075.0" y2="420.0" stroke="#8e8b66" stroke-width="0.7" />
<line x1="852.0" y1="340.0" x2="845.0" y2="395.0" stroke="#a8a480" stroke-width="0.6" />
<line x1="749.5" y1="382.5" x2="1184.0" y2="436.0" stroke="#c9c8a8" stroke-width="0.8" />
<polygon points="792.0,396.0 1184.0,441.0 1184.0,445.0 792.0,400.0" fill="#3f9c9c" />
<line x1="886.0" y1="413.7" x2="886.0" y2="420.7" stroke="#3a474c" stroke-width="1.1" />
<line x1="893.0" y1="414.6" x2="893.0" y2="421.6" stroke="#3a474c" stroke-width="1.1" />
<line x1="900.0" y1="415.4" x2="900.0" y2="422.4" stroke="#3a474c" stroke-width="1.1" />
<line x1="907.0" y1="416.2" x2="907.0" y2="423.2" stroke="#3a474c" stroke-width="1.1" />
<line x1="914.0" y1="417.0" x2="914.0" y2="424.0" stroke="#3a474c" stroke-width="1.1" />
<line x1="921.0" y1="417.9" x2="921.0" y2="424.9" stroke="#3a474c" stroke-width="1.1" />
<line x1="928.0" y1="418.7" x2="928.0" y2="425.7" stroke="#3a474c" stroke-width="1.1" />
<line x1="935.0" y1="419.5" x2="935.0" y2="426.5" stroke="#3a474c" stroke-width="1.1" />
<line x1="942.0" y1="420.3" x2="942.0" y2="427.3" stroke="#3a474c" stroke-width="1.1" />
<line x1="949.0" y1="421.2" x2="949.0" y2="428.2" stroke="#3a474c" stroke-width="1.1" />
<line x1="956.0" y1="422.0" x2="956.0" y2="429.0" stroke="#3a474c" stroke-width="1.1" />
<line x1="963.0" y1="422.8" x2="963.0" y2="429.8" stroke="#3a474c" stroke-width="1.1" />
<line x1="970.0" y1="423.6" x2="970.0" y2="430.6" stroke="#3a474c" stroke-width="1.1" />
<line x1="977.0" y1="424.5" x2="977.0" y2="431.5" stroke="#3a474c" stroke-width="1.1" />
<line x1="984.0" y1="425.3" x2="984.0" y2="432.3" stroke="#3a474c" stroke-width="1.1" />
<line x1="991.0" y1="426.1" x2="991.0" y2="433.1" stroke="#3a474c" stroke-width="1.1" />
<line x1="884.0" y1="421.0" x2="1000.0" y2="434.0" stroke="#3f9c9c" stroke-width="1.3" />
<line x1="1038.0" y1="428.6" x2="1038.0" y2="441.0" stroke="#44555a" stroke-width="1.2" />
<line x1="1062.0" y1="431.4" x2="1062.0" y2="441.0" stroke="#44555a" stroke-width="1.2" />
<polygon points="752.5,328.0 771.3,327.0 774.5,352.0 758.0,361.0" fill="#708cb9" stroke="#4d5f80" stroke-width="0.6" />
<line x1="758.0" y1="328.0" x2="762.5" y2="358.0" stroke="#4d5f80" stroke-width="0.7" />
<line x1="765.5" y1="327.5" x2="769.0" y2="355.0" stroke="#4d5f80" stroke-width="0.7" />
<line x1="753.0" y1="333.5" x2="772.0" y2="332.5" stroke="#4d5f80" stroke-width="0.6" />
<polygon points="745.0,326.0 760.0,316.3 777.3,324.8 775.0,327.5 748.0,329.0" fill="#708cb9" stroke="#4d5f80" stroke-width="0.6" />
<line x1="760.0" y1="316.3" x2="756.0" y2="328.5" stroke="#4d5f80" stroke-width="0.5" />
<line x1="760.0" y1="316.3" x2="766.0" y2="328.0" stroke="#4d5f80" stroke-width="0.5" />
<polygon points="808.7,329.7 826.5,330.5 827.8,349.5 810.0,348.8" fill="#dedede" stroke="#c2c2c2" stroke-width="0.7" />
<polygon points="808.7,329.7 826.5,330.5 827.0,338.0 809.3,337.5" fill="#e8e8e8" />
<line x1="812.0" y1="338.0" x2="824.0" y2="337.0" stroke="#cfcfcf" stroke-width="1" />
<rect x="885" y="283.500" width="5.500" height="32" fill="#5f7fae" stroke="#3d5070" stroke-width="0.500"/><rect x="881.800" y="277.800" width="9.500" height="6" fill="#f2f2f2" stroke="#444" stroke-width="0.900"/>
<rect x="1141.500" y="315" width="5" height="30" fill="#5f7fae"/><rect x="1139.500" y="311" width="9.500" height="6.500" fill="#f2f2f2" stroke="#777" stroke-width="0.8"/>
<ellipse cx="1013.500" cy="437" rx="13.500" ry="4" fill="none" stroke="#444" stroke-width="0.9"/>
<polygon points="1002.0,420.0 1025.0,422.0 1025.0,440.0 1002.0,438.0" fill="#708cb9" />
<polygon points="1001.0,374.0 1026.0,374.0 1028.0,395.0 1025.0,414.0 1002.0,414.0 999.0,395.0" fill="#708cb9" stroke="#4d5f80" stroke-width="0.6" />
<line x1="1013.0" y1="374.0" x2="1013.0" y2="414.0" stroke="#4d5f80" stroke-width="0.7" />
<line x1="1006.0" y1="374.0" x2="1005.0" y2="414.0" stroke="#4d5f80" stroke-width="0.5" />
<line x1="1021.0" y1="374.0" x2="1022.0" y2="414.0" stroke="#4d5f80" stroke-width="0.5" />
<ellipse cx="1013.500" cy="413" rx="14" ry="4" fill="none" stroke="#444" stroke-width="0.9"/>
<polygon points="997.0,352.0 1001.0,349.0 1026.0,349.0 1029.5,352.0 1029.5,369.0 1026.0,373.0 1001.0,373.0 997.0,369.0" fill="#ebebeb" stroke="#b9b9b9" stroke-width="0.8" />
<line x1="997.0" y1="360.5" x2="1029.5" y2="360.5" stroke="#c6c6c6" stroke-width="0.8" />
<line x1="1012.0" y1="349.0" x2="1012.0" y2="373.0" stroke="#9a9a9a" stroke-width="0.8" />
<polygon points="1004.0,373.0 1023.0,373.0 1023.0,377.0 1004.0,377.0" fill="#dedede" />
<polygon points="1097.0,398.0 1101.0,392.0 1116.0,392.0 1120.0,398.0 1120.0,453.0 1097.0,453.0" fill="#708cb9" stroke="#4d5f80" stroke-width="0.6" />
<polygon points="1097.0,398.0 1103.0,398.0 1103.0,453.0 1097.0,453.0" fill="#829fca" />
<line x1="1097.0" y1="432.0" x2="1120.0" y2="432.0" stroke="#4d5f80" stroke-width="0.6" />
<polygon points="1101.0,385.0 1115.0,385.0 1116.0,392.0 1101.0,392.0" fill="#d9d9d9" />
<polygon points="1094.0,366.0 1097.0,364.0 1122.0,364.0 1125.0,366.0 1125.0,383.0 1122.0,385.5 1097.0,385.5 1094.0,383.0" fill="#ececec" stroke="#bdbdbd" stroke-width="0.8" />
<polygon points="1098.0,375.0 1109.0,368.0 1121.0,375.0" fill="#fafafa" />
<line x1="1112.0" y1="368.0" x2="1120.0" y2="373.0" stroke="#555" stroke-width="0.9" />
<line x1="1094.0" y1="376.0" x2="1125.0" y2="376.0" stroke="#cfcfcf" stroke-width="0.7" />
<polygon points="1197.7,359.0 1216.5,359.0 1215.0,385.0 1213.7,404.0 1210.0,414.0 1204.0,423.0 1200.0,435.0 1201.0,450.0 1202.0,465.0 1189.6,465.0 1189.8,440.0 1190.6,423.0 1193.0,410.0 1194.4,400.0 1196.0,380.0" fill="#708cb9" stroke="#4d5f80" stroke-width="0.7" />
<line x1="1203.5" y1="359.0" x2="1200.5" y2="404.0" stroke="#4d5f80" stroke-width="0.6" />
<line x1="1210.0" y1="359.0" x2="1207.5" y2="404.0" stroke="#4d5f80" stroke-width="0.6" />
<line x1="1197.0" y1="368.0" x2="1216.0" y2="368.0" stroke="#4d5f80" stroke-width="0.5" />
<polyline points="1194.4,402.0 1204.0,407.0 1213.7,404.0" fill="none" stroke="#4d5f80" stroke-width="0.6" />
<polyline points="1192.0,414.0 1200.0,420.0 1208.0,417.0" fill="none" stroke="#4d5f80" stroke-width="0.6" />
<polyline points="1190.5,426.0 1196.0,431.0 1203.0,425.0" fill="none" stroke="#4d5f80" stroke-width="0.6" />
<polyline points="1200.5,404.0 1198.0,420.0 1195.0,432.0 1195.0,462.0" fill="none" stroke="#4d5f80" stroke-width="0.5" />
<polyline points="1190.0,447.0 1195.0,449.0 1201.0,447.0" fill="none" stroke="#4d5f80" stroke-width="0.5" />
<polygon points="1190.6,356.7 1207.9,347.0 1223.8,357.0 1220.0,360.0 1195.0,360.5" fill="#708cb9" stroke="#4d5f80" stroke-width="0.6" />
<line x1="1207.9" y1="347.0" x2="1203.0" y2="360.0" stroke="#4d5f80" stroke-width="0.5" />
<line x1="1207.9" y1="347.0" x2="1211.0" y2="360.0" stroke="#4d5f80" stroke-width="0.5" />
<polygon points="1187.7,464.0 1208.5,463.5 1208.5,485.6 1187.7,485.6" fill="#708cb9" stroke="#4d5f80" stroke-width="0.6" />
<line x1="888.0" y1="247.5" x2="717.0" y2="293.5" stroke="#111" stroke-width="1.2" />
<line x1="743.5" y1="303.0" x2="1205.0" y2="311.0" stroke="#111" stroke-width="1.2" />
<line x1="957.0" y1="244.0" x2="1145.0" y2="245.5" stroke="#111" stroke-width="1.2" />
<line x1="1208.0" y1="250.0" x2="1259.0" y2="305.0" stroke="#111" stroke-width="1.3" />
<line x1="692.3" y1="361.5" x2="740.0" y2="649.0" stroke="#111" stroke-width="1.2" />
<line x1="1260.0" y1="368.0" x2="1231.0" y2="682.0" stroke="#111" stroke-width="1.2" />
<line x1="1201.5" y1="303.0" x2="1198.5" y2="349.0" stroke="#111" stroke-width="1.2" />
<line x1="808.0" y1="706.0" x2="1167.0" y2="729.4" stroke="#111" stroke-width="1.2" />
<line x1="776.0" y1="668.0" x2="806.0" y2="627.0" stroke="#111" stroke-width="1.2" />
<line x1="759.4" y1="628.5" x2="777.0" y2="607.5" stroke="#111" stroke-width="1.2" />
<line x1="1192.3" y1="510.0" x2="1221.0" y2="696.0" stroke="#111" stroke-width="1.2" />
<line x1="1182.0" y1="547.0" x2="1200.0" y2="651.5" stroke="#444" stroke-width="1.1" />
<line x1="716.5" y1="293.5" x2="683.0" y2="301.5" stroke="#ee0000" stroke-width="6" stroke-linecap="butt"/>
<line x1="683.0" y1="301.5" x2="656.6" y2="308.8" stroke="#ee0000" stroke-width="3.2" />
<polygon points="647.0,311.5 654.8,302.3 658.4,315.3" fill="#ee0000" />
<ellipse cx="656.6" cy="308.8" rx="6.8" ry="6.1" fill="#ee0000" transform="rotate(-105.5 656.6 308.8)"/>
<line x1="623.0" y1="300.0" x2="683.0" y2="301.5" stroke="#00ee00" stroke-width="5.2" stroke-linecap="butt"/>
<line x1="683.0" y1="301.5" x2="723.5" y2="302.4" stroke="#00ee00" stroke-width="3.1" />
<polygon points="743.5,302.8 723.4,308.4 723.6,296.4" fill="#00ee00" />
<line x1="673.0" y1="236.5" x2="683.0" y2="301.5" stroke="#0000e8" stroke-width="6.8" stroke-linecap="butt"/>
<line x1="683.0" y1="301.5" x2="689.4" y2="342.7" stroke="#0000e8" stroke-width="3.8" />
<polygon points="692.3,361.5 683.2,343.7 695.6,341.8" fill="#0000e8" />
<line x1="842.0" y1="243.0" x2="900.0" y2="244.0" stroke="#00ee00" stroke-width="5.2" stroke-linecap="butt"/>
<line x1="900.0" y1="244.0" x2="937.0" y2="244.0" stroke="#00ee00" stroke-width="3.1" />
<polygon points="957.0,244.0 937.0,250.0 937.0,238.0" fill="#00ee00" />
<line x1="895.0" y1="181.0" x2="900.0" y2="244.0" stroke="#0000e8" stroke-width="6.8" stroke-linecap="butt"/>
<line x1="900.0" y1="244.0" x2="902.7" y2="281.0" stroke="#0000e8" stroke-width="3.8" />
<polygon points="904.0,298.0 896.5,281.5 909.0,280.6" fill="#0000e8" />
<circle cx="900.0" cy="244.0" r="13" fill="#0000e8"/>
<circle cx="888.0" cy="247.5" r="6" fill="#ee0000"/>
<line x1="908.0" y1="241.0" x2="916.0" y2="239.5" stroke="#ee0000" stroke-width="4" />
<line x1="1144.6" y1="245.5" x2="1207.0" y2="247.0" stroke="#00ee00" stroke-width="5.2" stroke-linecap="butt"/>
<line x1="1207.0" y1="247.0" x2="1245.6" y2="247.3" stroke="#00ee00" stroke-width="3.1" />
<polygon points="1264.6,247.4 1245.6,253.3 1245.6,241.3" fill="#00ee00" />
<line x1="1208.8" y1="183.0" x2="1207.0" y2="247.0" stroke="#0000e8" stroke-width="6.8" stroke-linecap="butt"/>
<line x1="1207.0" y1="247.0" x2="1203.2" y2="286.1" stroke="#0000e8" stroke-width="3.8" />
<polygon points="1201.5,303.0 1196.9,285.5 1209.4,286.7" fill="#0000e8" />
<circle cx="1208.0" cy="249.0" r="6" fill="#ee0000"/>
<line x1="1199.0" y1="242.0" x2="1204.0" y2="244.0" stroke="#ee0000" stroke-width="4" />
<line x1="1205.5" y1="310.0" x2="1266.0" y2="311.0" stroke="#00ee00" stroke-width="5.2" stroke-linecap="butt"/>
<line x1="1266.0" y1="311.0" x2="1305.6" y2="311.4" stroke="#00ee00" stroke-width="3.1" />
<polygon points="1324.6,311.6 1305.5,317.4 1305.7,305.4" fill="#00ee00" />
<line x1="1270.8" y1="250.0" x2="1266.0" y2="311.0" stroke="#0000e8" stroke-width="6.8" stroke-linecap="butt"/>
<line x1="1266.0" y1="311.0" x2="1262.6" y2="348.1" stroke="#0000e8" stroke-width="3.8" />
<polygon points="1261.0,366.0 1256.4,347.5 1268.9,348.6" fill="#0000e8" />
<circle cx="1271.5" cy="317.5" r="6" fill="#ee0000"/>
<line x1="1256.0" y1="302.0" x2="1262.0" y2="308.0" stroke="#ee0000" stroke-width="4" />
<line x1="1189.0" y1="482.0" x2="1189.0" y2="492.0" stroke="#0000e8" stroke-width="5" />
<line x1="1189.5" y1="492.0" x2="1191.0" y2="505.0" stroke="#ee0000" stroke-width="3" />
<circle cx="1191.4" cy="505.4" r="5.5" fill="#ee0000"/>
<line x1="1190.0" y1="491.0" x2="1190.0" y2="491.0" stroke="#00ee00" stroke-width="3.4" stroke-linecap="butt"/>
<line x1="1190.0" y1="491.0" x2="1227.6" y2="491.4" stroke="#00ee00" stroke-width="3.4" />
<polygon points="1244.6,491.6 1227.5,497.4 1227.7,485.4" fill="#00ee00" />
<line x1="1189.0" y1="512.0" x2="1187.5" y2="526.0" stroke="#0000e8" stroke-width="3.2" />
<polygon points="1186.5,541.0 1182.0,525.0 1192.5,526.5" fill="#0000e8" />
<line x1="776.0" y1="668.5" x2="749.0" y2="703.0" stroke="#ee0000" stroke-width="6" stroke-linecap="butt"/>
<line x1="749.0" y1="703.0" x2="729.4" y2="729.9" stroke="#ee0000" stroke-width="3.2" />
<polygon points="720.5,742.0 723.3,725.5 735.4,734.3" fill="#ee0000" />
<ellipse cx="729.4" cy="729.9" rx="7.5" ry="3.8" fill="#ee0000" transform="rotate(-143.8 729.4 729.9)"/>
<line x1="689.8" y1="699.0" x2="749.0" y2="703.0" stroke="#00ee00" stroke-width="5.2" stroke-linecap="butt"/>
<line x1="749.0" y1="703.0" x2="788.7" y2="705.0" stroke="#00ee00" stroke-width="3.1" />
<polygon points="807.7,706.0 788.4,711.0 789.0,699.0" fill="#00ee00" />
<line x1="741.0" y1="650.0" x2="749.0" y2="703.0" stroke="#0000e8" stroke-width="6.8" stroke-linecap="butt"/>
<line x1="749.0" y1="703.0" x2="754.2" y2="734.7" stroke="#0000e8" stroke-width="3.8" />
<polygon points="757.0,751.5 748.1,735.7 760.4,733.7" fill="#0000e8" />
<line x1="1221.0" y1="696.0" x2="1227.0" y2="733.0" stroke="#ee0000" stroke-width="6" stroke-linecap="butt"/>
<line x1="1227.0" y1="733.0" x2="1231.2" y2="761.6" stroke="#ee0000" stroke-width="3.2" />
<polygon points="1233.0,773.5 1224.8,762.6 1237.7,760.7" fill="#ee0000" />
<ellipse cx="1231.2" cy="761.6" rx="6.5" ry="5.2" fill="#ee0000" transform="rotate(171.6 1231.2 761.6)"/>
<line x1="1166.8" y1="729.4" x2="1227.0" y2="733.0" stroke="#00ee00" stroke-width="5.2" stroke-linecap="butt"/>
<line x1="1227.0" y1="733.0" x2="1267.0" y2="734.7" stroke="#00ee00" stroke-width="3.1" />
<polygon points="1286.0,735.5 1266.8,740.7 1267.3,728.7" fill="#00ee00" />
<line x1="1231.4" y1="681.7" x2="1227.0" y2="733.0" stroke="#0000e8" stroke-width="6.8" stroke-linecap="butt"/>
<line x1="1227.0" y1="733.0" x2="1223.9" y2="761.7" stroke="#0000e8" stroke-width="3.8" />
<polygon points="1222.0,778.6 1217.6,761.0 1230.1,762.4" fill="#0000e8" />
<circle cx="1490.0" cy="273.0" r="93.4" fill="none" stroke="#8a8a8a" stroke-width="1"/>
<line x1="1581.0" y1="273.0" x2="1587.0" y2="273.0" stroke="#8a8a8a" stroke-width="1" />
<line x1="1553.6" y1="336.6" x2="1557.9" y2="340.9" stroke="#8a8a8a" stroke-width="1" />
<line x1="1490.0" y1="364.0" x2="1490.0" y2="370.0" stroke="#8a8a8a" stroke-width="1" />
<line x1="1426.4" y1="336.6" x2="1422.1" y2="340.9" stroke="#8a8a8a" stroke-width="1" />
<line x1="1399.0" y1="273.0" x2="1393.0" y2="273.0" stroke="#8a8a8a" stroke-width="1" />
<line x1="1426.4" y1="209.4" x2="1422.1" y2="205.1" stroke="#8a8a8a" stroke-width="1" />
<line x1="1490.0" y1="182.0" x2="1490.0" y2="176.0" stroke="#8a8a8a" stroke-width="1" />
<line x1="1553.6" y1="209.4" x2="1557.9" y2="205.1" stroke="#8a8a8a" stroke-width="1" />
<rect x="1455" y="211.5" width="70" height="22.5" fill="#afafaf"/>
<rect x="1455" y="238" width="70" height="70" fill="#afafaf"/>
<rect x="1428" y="238" width="23.3" height="70" fill="#afafaf"/>
<rect x="1528.5" y="238" width="23.3" height="70" fill="#afafaf"/>
<rect x="1455" y="311.5" width="70" height="23" fill="#afafaf"/>
<line x1="1610.2" y1="178.5" x2="1610.2" y2="366.5" stroke="#8a8a8a" stroke-width="1.4" />
<line x1="1607.6" y1="179.0" x2="1612.8" y2="179.0" stroke="#8a8a8a" stroke-width="1.3" />
<line x1="1607.6" y1="195.0" x2="1612.8" y2="195.0" stroke="#8a8a8a" stroke-width="1.3" />
<line x1="1607.6" y1="225.6" x2="1612.8" y2="225.6" stroke="#8a8a8a" stroke-width="1.3" />
<line x1="1607.6" y1="241.0" x2="1612.8" y2="241.0" stroke="#8a8a8a" stroke-width="1.3" />
<line x1="1607.6" y1="272.4" x2="1612.8" y2="272.4" stroke="#8a8a8a" stroke-width="1.3" />
<line x1="1607.6" y1="288.0" x2="1612.8" y2="288.0" stroke="#8a8a8a" stroke-width="1.3" />
<line x1="1607.6" y1="303.5" x2="1612.8" y2="303.5" stroke="#8a8a8a" stroke-width="1.3" />
<line x1="1607.6" y1="319.0" x2="1612.8" y2="319.0" stroke="#8a8a8a" stroke-width="1.3" />
<line x1="1607.6" y1="334.8" x2="1612.8" y2="334.8" stroke="#8a8a8a" stroke-width="1.3" />
<line x1="1607.6" y1="365.5" x2="1612.8" y2="365.5" stroke="#8a8a8a" stroke-width="1.3" />
<polygon points="1600.0,290.0 1609.2,294.4 1600.0,299.0" fill="#000" />
<polygon points="1565.0,309.5 1569.2,301.8 1574.8,308.8" fill="#000" />
<defs><clipPath id="dm"><polygon points="1351.500,171.100 1367,155.200 1382.700,171.100 1367,186.500"/></clipPath></defs>
<g fill="none" stroke="#858585" stroke-width="1.500" stroke-linejoin="miter"><polygon points="1351.500,171.100 1367,155.200 1382.700,171.100 1367,186.500"/><g clip-path="url(#dm)" stroke-width="1.600"><rect x="1357.700" y="162.200" width="6.500" height="5.800"/><rect x="1369.800" y="162.200" width="6.500" height="5.800"/><rect x="1357.700" y="174.200" width="6.500" height="5.800"/><rect x="1369.800" y="174.200" width="6.500" height="5.800"/></g><path d="M1408.200 158.200A12.700 12.700 0 1 1 1396.900 172L1391.300 172.700 1399 160.700 1408.700 169.400 1403.500 170.700A6 6 0 1 0 1408.200 165Z"/><path d="M1625.800 383.700c8.500 0 15 5.800 15 13.300 0 8-10 13-15 16.500-5-3.500-15-8.500-15-16.500 0-7.500 6.500-13.300 15-13.300z"/><circle cx="1625.600" cy="396.600" r="5.800"/><circle cx="1625.900" cy="433.700" r="15.300"/><path d="M1610.800 435.500c7 6.500 22 6 30.200-2.500M1627 418.500c-11 6-11 24 2 30"/><path d="M1611.700 467.800h19.800v18.400h-19.800zM1611.700 467.800l8.600-8h19.700l-8.500 8M1640 459.800v18.200l-8.500 8.200"/><path d="M1612 476l8.200-8.200M1612 484l16-16M1618 486l13.500-13.500M1626 486l5.500-5.500" stroke-width="1.200"/><rect x="1611" y="493" width="29.500" height="27.500"/><path d="M1614.500 507l6.700-7v4.300h10.300v-4.300l6.700 7-6.700 7v-4.300h-10.300v4.300z"/></g>
<circle cx="1637.3" cy="422.8" r="3.3" fill="#ee0000"/>
<circle cx="1637.5" cy="460.5" r="3.3" fill="#ee0000"/></svg>
<span class="t" style="left:40.00px;top:1.50px;height:17px;line-height:17px;font-size:12px;color:#111;letter-spacing:0.078px;">Проект</span>
<span class="t" style="left:96.00px;top:1.50px;height:17px;line-height:17px;font-size:12px;color:#111;letter-spacing:0.027px;">Окна</span>
<span class="t" style="left:140.00px;top:1.50px;height:17px;line-height:17px;font-size:12px;color:#111;letter-spacing:0.161px;">Приложение</span>
<span class="t" style="left:228.00px;top:1.50px;height:17px;line-height:17px;font-size:12px;color:#111;letter-spacing:-0.154px;">Справка</span>
<span class="t" style="left:302.00px;top:1.50px;height:17px;line-height:17px;font-size:12px;color:#9aa0a8;letter-spacing:-0.166px;">MS Навигатор(DX)</span>
<span class="t" style="left:1814.00px;top:2.50px;height:17px;line-height:17px;font-size:12px;color:#222;letter-spacing:-1.151px;">ГТЭ</span>
<span class="t" style="left:16.00px;top:25.70px;height:17px;line-height:17px;font-size:12px;color:#3e5a8c;letter-spacing:-0.013px;">Модель</span>
<span class="t" style="left:90.00px;top:24.50px;height:17px;line-height:17px;font-size:12px;color:#3e5a8c;letter-spacing:0.113px;">Аннотации</span>
<span class="t" style="left:181.00px;top:24.50px;height:17px;line-height:17px;font-size:12px;color:#3e5a8c;letter-spacing:0.107px;">Инструменты</span>
<span class="t" style="left:10.11px;top:126.70px;height:17px;line-height:17px;font-size:12px;color:#3e5a8c;">Просмотр модели</span>
<span class="t" style="left:170.07px;top:126.70px;height:17px;line-height:17px;font-size:12px;color:#3e5a8c;">Выбор</span>
<span class="t" style="left:297.66px;top:126.70px;height:17px;line-height:17px;font-size:12px;color:#3e5a8c;">Фокусировка</span>
<span class="t" style="left:506.95px;top:126.70px;height:17px;line-height:17px;font-size:12px;color:#3e5a8c;">Видимость</span>
<span class="t" style="left:24.50px;top:84.50px;height:17px;line-height:17px;font-size:12px;color:#3e5a8c;letter-spacing:-0.189px;">Показать все</span>
<span class="t" style="left:130.00px;top:84.50px;height:17px;line-height:17px;font-size:12px;color:#3e5a8c;letter-spacing:-0.049px;">Выбрать</span>
<span class="t" style="left:132.50px;top:101.00px;height:17px;line-height:17px;font-size:12px;color:#3e5a8c;letter-spacing:0.440px;">рамкой</span>
<span class="t" style="left:194.00px;top:84.50px;height:17px;line-height:17px;font-size:12px;color:#3e5a8c;letter-spacing:-0.105px;">Отменить</span>
<span class="t" style="left:203.00px;top:101.00px;height:17px;line-height:17px;font-size:12px;color:#3e5a8c;letter-spacing:0.153px;">выбор</span>
<span class="t" style="left:295.50px;top:84.50px;height:17px;line-height:17px;font-size:12px;color:#3e5a8c;letter-spacing:-0.172px;">На</span>
<span class="t" style="left:268.00px;top:101.00px;height:17px;line-height:17px;font-size:12px;color:#3e5a8c;letter-spacing:-0.014px;">выделенном</span>
<span class="t" style="left:370.00px;top:84.50px;height:17px;line-height:17px;font-size:12px;color:#3e5a8c;letter-spacing:-0.172px;">На</span>
<span class="t" style="left:356.50px;top:101.00px;height:17px;line-height:17px;font-size:12px;color:#3e5a8c;letter-spacing:0.057px;">модели</span>
<span class="t" style="left:420.00px;top:84.50px;height:17px;line-height:17px;font-size:12px;color:#3e5a8c;letter-spacing:-0.142px;">Отобразить</span>
<span class="t" style="left:429.00px;top:101.00px;height:17px;line-height:17px;font-size:12px;color:#3e5a8c;letter-spacing:0.105px;">скрытое</span>
<span class="t" style="left:500.00px;top:84.50px;height:17px;line-height:17px;font-size:12px;color:#3e5a8c;letter-spacing:0.013px;">Изолировать</span>
<span class="t" style="left:502.00px;top:101.00px;height:17px;line-height:17px;font-size:12px;color:#3e5a8c;letter-spacing:-0.056px;">выделенное</span>
<span class="t" style="left:601.50px;top:84.50px;height:17px;line-height:17px;font-size:12px;color:#3e5a8c;letter-spacing:-0.161px;">Скрыть</span>
<span class="t" style="left:587.50px;top:101.00px;height:17px;line-height:17px;font-size:12px;color:#3e5a8c;letter-spacing:-0.056px;">выделенное</span>
<span class="t" style="left:5.60px;top:152.50px;height:17px;line-height:17px;font-size:12px;color:#1a1a1a;letter-spacing:-0.094px;">Менеджер проекта</span>
<span class="t" style="left:31.00px;top:179.00px;height:16px;line-height:16px;font-size:11.5px;color:#1e1e1e;letter-spacing:0.117px;">Данные проекта</span>
<span class="t" style="left:51.40px;top:196.00px;height:16px;line-height:16px;font-size:11.5px;color:#1e1e1e;font-weight:700;letter-spacing:-0.175px;">Источники данных</span>
<span class="t" style="left:82.00px;top:214.00px;height:16px;line-height:16px;font-size:11.5px;color:#1e1e1e;letter-spacing:-0.070px;">Газотурбинная электростанция.MLT</span>
<span class="t" style="left:113.00px;top:234.00px;height:16px;line-height:16px;font-size:11.5px;color:#1e1e1e;letter-spacing:-0.031px;">Комплекс</span>
<span class="t" style="left:133.00px;top:254.00px;height:16px;line-height:16px;font-size:11.5px;color:#1e1e1e;letter-spacing:-0.074px;">01.Промышленная площадка</span>
<span class="t" style="left:153.00px;top:274.00px;height:16px;line-height:16px;font-size:11.5px;color:#1e1e1e;letter-spacing:-0.075px;">00.Наружные сети</span>
<span class="t" style="left:153.00px;top:294.00px;height:16px;line-height:16px;font-size:11.5px;color:#1e1e1e;letter-spacing:0.020px;">1.Главный корпус</span>
<span class="t" style="left:153.00px;top:314.00px;height:16px;line-height:16px;font-size:11.5px;color:#1e1e1e;letter-spacing:-0.203px;">2.Выхлопная труба</span>
<span class="t" style="left:153.00px;top:334.00px;height:16px;line-height:16px;font-size:11.5px;color:#1e1e1e;letter-spacing:-0.043px;">3.Помещение деаэраторов</span>
<span class="t" style="left:153.00px;top:354.00px;height:16px;line-height:16px;font-size:11.5px;color:#1e1e1e;letter-spacing:-0.046px;">4.Гибкие связи 6 кВ</span>
<span class="t" style="left:153.00px;top:374.00px;height:16px;line-height:16px;font-size:11.5px;color:#1e1e1e;letter-spacing:0.212px;">5. Блок подготовки топливного и пускового газа</span>
<span class="t" style="left:173.30px;top:394.00px;height:16px;line-height:16px;font-size:11.5px;color:#1e1e1e;letter-spacing:0.111px;">5.1.Пункт подготовки газа</span>
<span class="t" style="left:173.30px;top:414.00px;height:16px;line-height:16px;font-size:11.5px;color:#1e1e1e;letter-spacing:-0.089px;">5.2.Сепараторы улавливания нефти</span>
<span class="t" style="left:153.00px;top:434.00px;height:16px;line-height:16px;font-size:11.5px;color:#1e1e1e;letter-spacing:0.026px;">6.Насосная станция перекачки бытовых стоков</span>
<span class="t" style="left:153.00px;top:454.00px;height:16px;line-height:16px;font-size:11.5px;color:#1e1e1e;letter-spacing:0.021px;">7.Насосная станция перекачки дождевых стоков</span>
<span class="t" style="left:15.40px;top:478.50px;height:17px;line-height:17px;font-size:12px;color:#4a6a9c;letter-spacing:-0.103px;">Менеджер систем</span>
<span class="t" style="left:146.40px;top:479.50px;height:17px;line-height:17px;font-size:12px;color:#4a6a9c;letter-spacing:-0.056px;">Менеджер проекта</span>
<span class="t" style="left:5.60px;top:502.50px;height:17px;line-height:17px;font-size:12px;color:#1a1a1a;letter-spacing:-0.098px;">Менеджер объектов</span>
<span class="t" style="left:1656.60px;top:152.50px;height:17px;line-height:17px;font-size:12px;color:#1a1a1a;letter-spacing:-0.090px;">Менеджер свойств</span>
<span class="t" style="left:1666.00px;top:792.50px;height:17px;line-height:17px;font-size:12px;color:#4a6a9c;letter-spacing:-0.133px;">Менеджер файлов</span>
<span class="t" style="left:1800.00px;top:793.50px;height:17px;line-height:17px;font-size:12px;color:#4a6a9c;letter-spacing:-0.078px;">Менеджер свойств</span>
<span class="t" style="left:10.20px;top:818.50px;height:17px;line-height:17px;font-size:12px;color:#1a1a1a;letter-spacing:-0.150px;">Менеджер сценариев</span>
<span class="t" style="left:1809.80px;top:820.50px;height:17px;line-height:17px;font-size:12px;color:#1a1a1a;letter-spacing:-0.137px;">Запустить</span>
<span class="t" style="left:207.01px;top:861.00px;height:17px;line-height:17px;font-size:12px;color:#1e1e1e;">Имя</span>
<span class="t" style="left:443.95px;top:861.00px;height:17px;line-height:17px;font-size:12px;color:#1e1e1e;">Время</span>
<span class="t" style="left:536.55px;top:871.40px;height:16px;line-height:16px;font-size:11.6px;color:#222;">40</span>
<span class="t" style="left:588.62px;top:871.40px;height:16px;line-height:16px;font-size:11.6px;color:#222;">50</span>
<span class="t" style="left:640.69px;top:871.40px;height:16px;line-height:16px;font-size:11.6px;color:#222;">00</span>
<span class="t" style="left:692.76px;top:871.40px;height:16px;line-height:16px;font-size:11.6px;color:#222;">10</span>
<span class="t" style="left:744.83px;top:871.40px;height:16px;line-height:16px;font-size:11.6px;color:#222;">20</span>
<span class="t" style="left:796.90px;top:871.40px;height:16px;line-height:16px;font-size:11.6px;color:#222;">30</span>
<span class="t" style="left:848.97px;top:871.40px;height:16px;line-height:16px;font-size:11.6px;color:#222;">40</span>
<span class="t" style="left:901.04px;top:871.40px;height:16px;line-height:16px;font-size:11.6px;color:#222;">50</span>
<span class="t" style="left:953.11px;top:871.40px;height:16px;line-height:16px;font-size:11.6px;color:#222;">00</span>
<span class="t" style="left:1005.18px;top:871.40px;height:16px;line-height:16px;font-size:11.6px;color:#222;">10</span>
<span class="t" style="left:1057.25px;top:871.40px;height:16px;line-height:16px;font-size:11.6px;color:#222;">20</span>
<span class="t" style="left:1109.32px;top:871.40px;height:16px;line-height:16px;font-size:11.6px;color:#222;">30</span>
<span class="t" style="left:1161.39px;top:871.40px;height:16px;line-height:16px;font-size:11.6px;color:#222;">40</span>
<span class="t" style="left:1213.46px;top:871.40px;height:16px;line-height:16px;font-size:11.6px;color:#222;">50</span>
<span class="t" style="left:1265.53px;top:871.40px;height:16px;line-height:16px;font-size:11.6px;color:#222;">00</span>
<span class="t" style="left:1317.60px;top:871.40px;height:16px;line-height:16px;font-size:11.6px;color:#222;">10</span>
<span class="t" style="left:1369.67px;top:871.40px;height:16px;line-height:16px;font-size:11.6px;color:#222;">20</span>
<span class="t" style="left:1421.74px;top:871.40px;height:16px;line-height:16px;font-size:11.6px;color:#222;">30</span>
<span class="t" style="left:1473.81px;top:871.40px;height:16px;line-height:16px;font-size:11.6px;color:#222;">40</span>
<span class="t" style="left:1525.88px;top:871.40px;height:16px;line-height:16px;font-size:11.6px;color:#222;">50</span>
<span class="t" style="left:1577.95px;top:871.40px;height:16px;line-height:16px;font-size:11.6px;color:#222;">00</span>
<span class="t" style="left:1630.02px;top:871.40px;height:16px;line-height:16px;font-size:11.6px;color:#222;">10</span>
<span class="t" style="left:1682.09px;top:871.40px;height:16px;line-height:16px;font-size:11.6px;color:#222;">20</span>
<span class="t" style="left:1734.16px;top:871.40px;height:16px;line-height:16px;font-size:11.6px;color:#222;">30</span>
<span class="t" style="left:1786.23px;top:871.40px;height:16px;line-height:16px;font-size:11.6px;color:#222;">40</span>
<span class="t" style="left:1838.30px;top:871.40px;height:16px;line-height:16px;font-size:11.6px;color:#222;">50</span>
<span class="t" style="left:1890.37px;top:871.40px;height:16px;line-height:16px;font-size:11.6px;color:#222;">00</span>
<span class="t" style="left:772.98px;top:850.30px;height:16px;line-height:16px;font-size:11.6px;color:#222;">11</span>
<span class="t" style="left:1084.95px;top:850.30px;height:16px;line-height:16px;font-size:11.6px;color:#222;">12</span>
<span class="t" style="left:1397.35px;top:850.30px;height:16px;line-height:16px;font-size:11.6px;color:#222;">13</span>
<span class="t" style="left:1709.75px;top:850.30px;height:16px;line-height:16px;font-size:11.6px;color:#222;">14</span>
<div id="vp" style="left:0;top:0;width:1920px;height:1040px;will-change:transform;pointer-events:none;">
<span class="t" style="left:490.50px;top:160.50px;height:18px;line-height:18px;font-size:13px;color:#1f1f1f;letter-spacing:-0.037px;">[Персп.] [Иллюстрация в цвете]</span>
<span class="t" style="left:1483.86px;top:152.50px;height:24px;line-height:24px;font-size:17px;color:#7b7b7b;">С</span>
<span class="t" style="left:1483.41px;top:368.50px;height:24px;line-height:24px;font-size:17px;color:#7b7b7b;">Ю</span>
<span class="t" style="left:1380.86px;top:260.50px;height:24px;line-height:24px;font-size:17px;color:#7b7b7b;">З</span>
<span class="t" style="left:1587.33px;top:260.50px;height:24px;line-height:24px;font-size:17px;color:#7b7b7b;">В</span>
<span class="t" style="left:1468.50px;top:213.30px;height:18px;line-height:18px;font-size:13px;color:#f4f4f4;letter-spacing:-0.122px;">[Сзади]</span>
<span class="t" style="left:1464.50px;top:263.50px;height:18px;line-height:18px;font-size:13px;color:#f4f4f4;letter-spacing:0.039px;">[Сверху]</span>
<span class="t" style="left:1460.35px;top:313.70px;height:18px;line-height:18px;font-size:13px;color:#f4f4f4;letter-spacing:-0.067px;">[Спереди]</span>
<span class="t" style="left:1416.20px;top:263.50px;height:18px;line-height:18px;font-size:13px;color:#f4f4f4;letter-spacing:-0.203px;transform:rotate(-90deg);">[Слева]</span>
<span class="t" style="left:1512.90px;top:263.80px;height:18px;line-height:18px;font-size:13px;color:#f4f4f4;letter-spacing:-0.139px;transform:rotate(-90deg);">[Справа]</span>
<span class="t" style="left:1618.94px;top:171.00px;height:17px;line-height:17px;font-size:12px;color:#222;">+90</span>
<span class="t" style="left:1618.94px;top:217.50px;height:17px;line-height:17px;font-size:12px;color:#222;">+45</span>
<span class="t" style="left:1617.60px;top:264.00px;height:17px;line-height:17px;font-size:12px;color:#222;">0</span>
<span class="t" style="left:1621.96px;top:310.50px;height:17px;line-height:17px;font-size:12px;color:#222;">-45</span>
<span class="t" style="left:1621.96px;top:357.00px;height:17px;line-height:17px;font-size:12px;color:#222;">-90</span>
</div>
</div></body></html>
